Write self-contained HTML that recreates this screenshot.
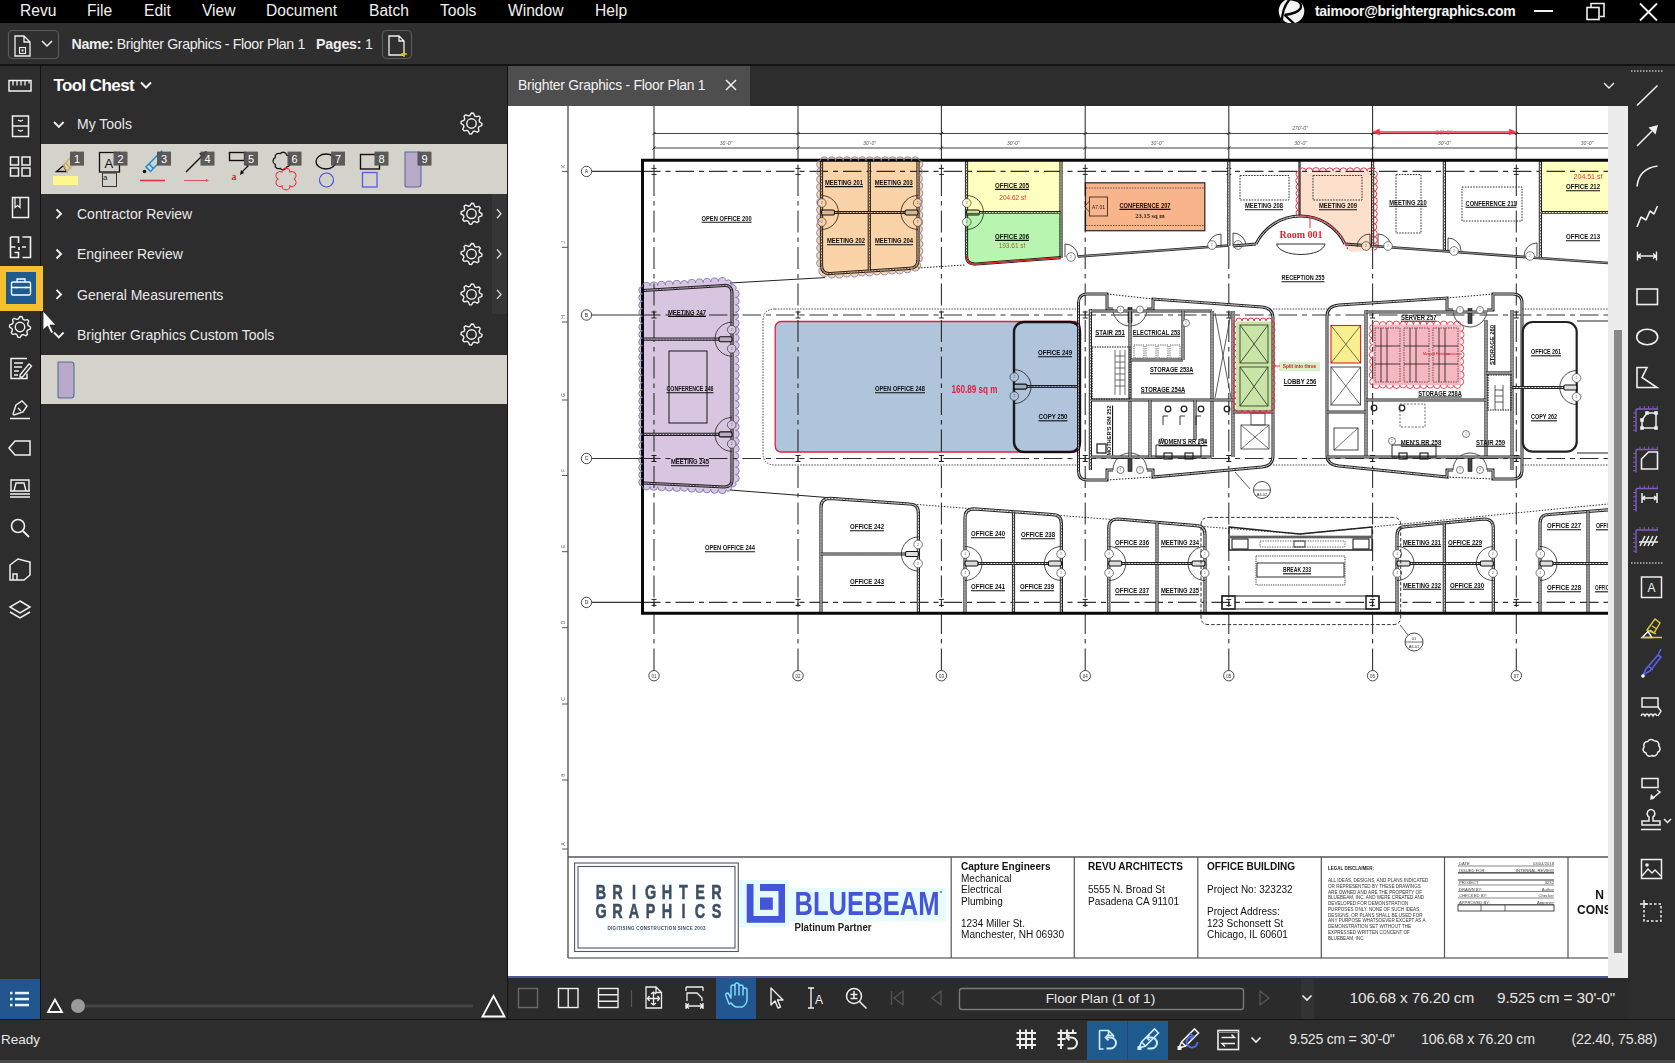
<!DOCTYPE html>
<html><head><meta charset="utf-8"><title>Revu</title>
<style>
html,body{margin:0;padding:0;}
body{width:1675px;height:1063px;position:relative;overflow:hidden;background:#2d2d2d;font-family:"Liberation Sans",sans-serif;}
.b{position:absolute;}
.t{position:absolute;white-space:nowrap;}
svg{position:absolute;left:0;top:0;}
</style></head><body>
<div class="b" style="left:0px;top:0px;width:1675px;height:23px;background:#000;"></div>
<div class="b" style="left:0px;top:23px;width:1675px;height:41px;background:#2f2f2f;"></div>
<div class="b" style="left:0px;top:64px;width:1675px;height:2px;background:#141414;"></div>
<div class="b" style="left:0px;top:66px;width:40px;height:954px;background:#2d2d2d;"></div>
<div class="b" style="left:40px;top:66px;width:1px;height:954px;background:#111;"></div>
<div class="b" style="left:41px;top:66px;width:466px;height:954px;background:#2d2d2d;"></div>
<div class="b" style="left:507px;top:66px;width:1px;height:954px;background:#151515;"></div>
<div class="b" style="left:508px;top:66px;width:1120px;height:40px;background:#2d2d2d;"></div>
<div class="b" style="left:508px;top:66px;width:242px;height:40px;background:#4e4e4e;"></div>
<div class="b" style="left:1628px;top:66px;width:47px;height:954px;background:#2d2d2d;"></div>
<div class="b" style="left:508px;top:978px;width:1120px;height:41px;background:#2b2b2b;"></div>
<div class="b" style="left:0px;top:1019px;width:1675px;height:1px;background:#151515;"></div>
<div class="b" style="left:0px;top:1020px;width:1675px;height:41px;background:#2d2d2d;"></div>
<div class="b" style="left:0px;top:1060px;width:1675px;height:3px;background:#4a4a4a;"></div>
<div class="b" style="left:41px;top:144px;width:466px;height:50px;background:#d4d3cb;"></div>
<div class="b" style="left:41px;top:355px;width:466px;height:49px;background:#d4d3cb;"></div>
<div class="b" style="left:492px;top:194px;width:15px;height:120px;background:#363636;"></div>
<div class="b" style="left:0px;top:266px;width:43px;height:45px;background:#f6bf30;"></div>
<div class="b" style="left:6px;top:272px;width:30px;height:32px;background:#1f5b8e;"></div>
<div class="b" style="left:0px;top:979px;width:40px;height:40px;background:#22568f;"></div>
<div class="b" style="left:716px;top:978px;width:40px;height:41px;background:#22568f;"></div>
<div class="b" style="left:1087px;top:1021px;width:81px;height:39px;background:#1e5a8e;"></div>
<div class="b" style="left:1127px;top:1021px;width:1px;height:39px;background:#1a4a75;"></div>
<div class="b" style="left:1608px;top:106px;width:20px;height:872px;background:#ececec;"></div>
<div class="b" style="left:1614px;top:330px;width:8px;height:623px;background:#888;"></div>
<div class="b" style="left:508px;top:976px;width:1100px;height:2px;background:#505a90;"></div>
<div class="t" style="left:20px;top:3.09px;font-size:15.6px;line-height:15.6px;color:#f0f0f0;">Revu</div>
<div class="t" style="left:87px;top:3.09px;font-size:15.6px;line-height:15.6px;color:#f0f0f0;">File</div>
<div class="t" style="left:144px;top:3.09px;font-size:15.6px;line-height:15.6px;color:#f0f0f0;">Edit</div>
<div class="t" style="left:202px;top:3.09px;font-size:15.6px;line-height:15.6px;color:#f0f0f0;">View</div>
<div class="t" style="left:266px;top:3.09px;font-size:15.6px;line-height:15.6px;color:#f0f0f0;">Document</div>
<div class="t" style="left:369px;top:3.09px;font-size:15.6px;line-height:15.6px;color:#f0f0f0;">Batch</div>
<div class="t" style="left:440px;top:3.09px;font-size:15.6px;line-height:15.6px;color:#f0f0f0;">Tools</div>
<div class="t" style="left:508px;top:3.09px;font-size:15.6px;line-height:15.6px;color:#f0f0f0;">Window</div>
<div class="t" style="left:595px;top:3.09px;font-size:15.6px;line-height:15.6px;color:#f0f0f0;">Help</div>
<div class="t" style="left:1315px;top:3.75px;font-size:14px;line-height:14px;color:#f4f4f4;font-weight:bold;letter-spacing:-0.3px;">taimoor@brightergraphics.com</div>
<div class="t" style="left:71.5px;top:36.88px;font-size:14.2px;line-height:14.2px;color:#ececec;letter-spacing:-0.35px;"><b>Name:</b> Brighter Graphics - Floor Plan 1</div>
<div class="t" style="left:316px;top:36.88px;font-size:14.2px;line-height:14.2px;color:#ececec;letter-spacing:-0.2px;"><b>Pages:</b> 1</div>
<div class="t" style="left:518px;top:78.63px;font-size:13.9px;line-height:13.9px;color:#f2f2f2;letter-spacing:-0.25px;">Brighter Graphics - Floor Plan 1</div>
<div class="t" style="left:53.5px;top:76.91px;font-size:17px;line-height:17px;color:#fafafa;font-weight:bold;letter-spacing:-0.6px;">Tool Chest</div>
<div class="t" style="left:77px;top:117.15px;font-size:14px;line-height:14px;color:#e8e8e8;">My Tools</div>
<div class="t" style="left:77px;top:207.05px;font-size:14px;line-height:14px;color:#e8e8e8;">Contractor Review</div>
<div class="t" style="left:77px;top:247.15px;font-size:14px;line-height:14px;color:#e8e8e8;">Engineer Review</div>
<div class="t" style="left:77px;top:287.55px;font-size:14px;line-height:14px;color:#e8e8e8;">General Measurements</div>
<div class="t" style="left:77px;top:327.65px;font-size:14px;line-height:14px;color:#e8e8e8;">Brighter Graphics Custom Tools</div>
<div class="t" style="left:1px;top:1032.57px;font-size:13.5px;line-height:13.5px;color:#e8e8e8;">Ready</div>
<div class="t" style="left:1100.5px;top:991.90px;font-size:13.7px;line-height:13.7px;color:#eaeaea;transform:translateX(-50%);">Floor Plan (1 of 1)</div>
<div class="t" style="left:1349.5px;top:990.16px;font-size:15.4px;line-height:15.4px;color:#e4e4e4;letter-spacing:-0.12px;">106.68 x 76.20 cm</div>
<div class="t" style="left:1497px;top:990.16px;font-size:15.4px;line-height:15.4px;color:#e4e4e4;letter-spacing:-0.12px;">9.525 cm = 30'-0"</div>
<div class="t" style="left:1289px;top:1032.28px;font-size:14.2px;line-height:14.2px;color:#e4e4e4;letter-spacing:-0.3px;">9.525 cm = 30'-0"</div>
<div class="t" style="left:1421px;top:1032.28px;font-size:14.2px;line-height:14.2px;color:#e4e4e4;letter-spacing:-0.17px;">106.68 x 76.20 cm</div>
<div class="t" style="left:1571.5px;top:1032.28px;font-size:14.2px;line-height:14.2px;color:#e4e4e4;letter-spacing:-0.2px;">(22.40, 75.88)</div>

<svg width="1675" height="1063" viewBox="0 0 1675 1063">
<defs><clipPath id="dc"><rect x="508" y="106" width="1100" height="870"/></clipPath></defs>
<g clip-path="url(#dc)">
<rect x="508" y="106" width="1100" height="870" fill="#fff"/>
<line x1="568" y1="106" x2="568" y2="958" stroke="#555" stroke-width="1.4" />
<line x1="568" y1="857" x2="1608" y2="857" stroke="#555" stroke-width="1.4" />
<line x1="568" y1="958" x2="1608" y2="958" stroke="#777" stroke-width="1.6" />
<line x1="951.2" y1="857" x2="951.2" y2="958" stroke="#555" stroke-width="1.2" />
<line x1="1074.3" y1="857" x2="1074.3" y2="958" stroke="#555" stroke-width="1.2" />
<line x1="1197.8" y1="857" x2="1197.8" y2="958" stroke="#555" stroke-width="1.2" />
<line x1="1321.3" y1="857" x2="1321.3" y2="958" stroke="#555" stroke-width="1.2" />
<line x1="1444.5" y1="857" x2="1444.5" y2="958" stroke="#555" stroke-width="1.2" />
<line x1="1568" y1="857" x2="1568" y2="958" stroke="#555" stroke-width="1.2" />
<line x1="562" y1="171.4" x2="568" y2="171.4" stroke="#555" stroke-width="1" />
<text x="563.5" y="167.9" font-size="5" font-family="Liberation Sans" fill="#555" text-anchor="middle" transform="rotate(-90 563.5 166.4)">K</text>
<line x1="562" y1="247.3" x2="568" y2="247.3" stroke="#555" stroke-width="1" />
<text x="563.5" y="243.8" font-size="5" font-family="Liberation Sans" fill="#555" text-anchor="middle" transform="rotate(-90 563.5 242.3)">J</text>
<line x1="562" y1="322" x2="568" y2="322" stroke="#555" stroke-width="1" />
<text x="563.5" y="318.5" font-size="5" font-family="Liberation Sans" fill="#555" text-anchor="middle" transform="rotate(-90 563.5 317)">H</text>
<line x1="562" y1="400" x2="568" y2="400" stroke="#555" stroke-width="1" />
<text x="563.5" y="396.5" font-size="5" font-family="Liberation Sans" fill="#555" text-anchor="middle" transform="rotate(-90 563.5 395)">G</text>
<line x1="562" y1="475.5" x2="568" y2="475.5" stroke="#555" stroke-width="1" />
<text x="563.5" y="472.0" font-size="5" font-family="Liberation Sans" fill="#555" text-anchor="middle" transform="rotate(-90 563.5 470.5)">F</text>
<line x1="562" y1="551.7" x2="568" y2="551.7" stroke="#555" stroke-width="1" />
<text x="563.5" y="548.2" font-size="5" font-family="Liberation Sans" fill="#555" text-anchor="middle" transform="rotate(-90 563.5 546.7)">E</text>
<line x1="562" y1="627.7" x2="568" y2="627.7" stroke="#555" stroke-width="1" />
<text x="563.5" y="624.2" font-size="5" font-family="Liberation Sans" fill="#555" text-anchor="middle" transform="rotate(-90 563.5 622.7)">D</text>
<line x1="562" y1="704" x2="568" y2="704" stroke="#555" stroke-width="1" />
<text x="563.5" y="700.5" font-size="5" font-family="Liberation Sans" fill="#555" text-anchor="middle" transform="rotate(-90 563.5 699)">C</text>
<line x1="562" y1="780" x2="568" y2="780" stroke="#555" stroke-width="1" />
<text x="563.5" y="776.5" font-size="5" font-family="Liberation Sans" fill="#555" text-anchor="middle" transform="rotate(-90 563.5 775)">B</text>
<line x1="562" y1="849" x2="568" y2="849" stroke="#555" stroke-width="1" />
<text x="563.5" y="845.5" font-size="5" font-family="Liberation Sans" fill="#555" text-anchor="middle" transform="rotate(-90 563.5 844)">A</text>
<line x1="654" y1="106" x2="654" y2="148" stroke="#333" stroke-width="1.1" />
<line x1="654" y1="670.5" x2="654" y2="148" stroke="#333" stroke-width="1.1" stroke-dasharray="22 5 4.5 5" />
<circle cx="654" cy="675.7" r="5.2" fill="#fff" stroke="#333" stroke-width="0.9"/>
<line x1="798" y1="106" x2="798" y2="148" stroke="#333" stroke-width="1.1" />
<line x1="798" y1="670.5" x2="798" y2="148" stroke="#333" stroke-width="1.1" stroke-dasharray="22 5 4.5 5" />
<circle cx="798" cy="675.7" r="5.2" fill="#fff" stroke="#333" stroke-width="0.9"/>
<line x1="941.4" y1="106" x2="941.4" y2="148" stroke="#333" stroke-width="1.1" />
<line x1="941.4" y1="670.5" x2="941.4" y2="148" stroke="#333" stroke-width="1.1" stroke-dasharray="22 5 4.5 5" />
<circle cx="941.4" cy="675.7" r="5.2" fill="#fff" stroke="#333" stroke-width="0.9"/>
<line x1="1085.2" y1="106" x2="1085.2" y2="148" stroke="#333" stroke-width="1.1" />
<line x1="1085.2" y1="670.5" x2="1085.2" y2="148" stroke="#333" stroke-width="1.1" stroke-dasharray="22 5 4.5 5" />
<circle cx="1085.2" cy="675.7" r="5.2" fill="#fff" stroke="#333" stroke-width="0.9"/>
<line x1="1228.8" y1="106" x2="1228.8" y2="148" stroke="#333" stroke-width="1.1" />
<line x1="1228.8" y1="670.5" x2="1228.8" y2="148" stroke="#333" stroke-width="1.1" stroke-dasharray="22 5 4.5 5" />
<circle cx="1228.8" cy="675.7" r="5.2" fill="#fff" stroke="#333" stroke-width="0.9"/>
<line x1="1372.6" y1="106" x2="1372.6" y2="148" stroke="#333" stroke-width="1.1" />
<line x1="1372.6" y1="670.5" x2="1372.6" y2="148" stroke="#333" stroke-width="1.1" stroke-dasharray="22 5 4.5 5" />
<circle cx="1372.6" cy="675.7" r="5.2" fill="#fff" stroke="#333" stroke-width="0.9"/>
<line x1="1516.3" y1="106" x2="1516.3" y2="148" stroke="#333" stroke-width="1.1" />
<line x1="1516.3" y1="670.5" x2="1516.3" y2="148" stroke="#333" stroke-width="1.1" stroke-dasharray="22 5 4.5 5" />
<circle cx="1516.3" cy="675.7" r="5.2" fill="#fff" stroke="#333" stroke-width="0.9"/>
<line x1="591.7" y1="171.4" x2="642" y2="171.4" stroke="#333" stroke-width="1.1" />
<line x1="642" y1="171.4" x2="1608" y2="171.4" stroke="#333" stroke-width="1.1" stroke-dasharray="18.5 5 5 5" />
<circle cx="586.5" cy="171.4" r="5.2" fill="#fff" stroke="#333" stroke-width="0.9"/>
<text x="586.5" y="173.20000000000002" font-size="5" font-family="Liberation Sans" fill="#333" text-anchor="middle">A</text>
<line x1="591.7" y1="315" x2="642" y2="315" stroke="#333" stroke-width="1.1" />
<line x1="642" y1="315" x2="1608" y2="315" stroke="#333" stroke-width="1.1" stroke-dasharray="18.5 5 5 5" />
<circle cx="586.5" cy="315" r="5.2" fill="#fff" stroke="#333" stroke-width="0.9"/>
<text x="586.5" y="316.8" font-size="5" font-family="Liberation Sans" fill="#333" text-anchor="middle">B</text>
<line x1="591.7" y1="458.5" x2="642" y2="458.5" stroke="#333" stroke-width="1.1" />
<line x1="642" y1="458.5" x2="1608" y2="458.5" stroke="#333" stroke-width="1.1" stroke-dasharray="18.5 5 5 5" />
<circle cx="586.5" cy="458.5" r="5.2" fill="#fff" stroke="#333" stroke-width="0.9"/>
<text x="586.5" y="460.3" font-size="5" font-family="Liberation Sans" fill="#333" text-anchor="middle">C</text>
<line x1="591.7" y1="602.4" x2="642" y2="602.4" stroke="#333" stroke-width="1.1" />
<line x1="642" y1="602.4" x2="1608" y2="602.4" stroke="#333" stroke-width="1.1" stroke-dasharray="18.5 5 5 5" />
<circle cx="586.5" cy="602.4" r="5.2" fill="#fff" stroke="#333" stroke-width="0.9"/>
<text x="586.5" y="604.1999999999999" font-size="5" font-family="Liberation Sans" fill="#333" text-anchor="middle">D</text>
<text x="654" y="677.5" font-size="4.5" font-family="Liberation Sans" fill="#333" text-anchor="middle">01</text>
<text x="798" y="677.5" font-size="4.5" font-family="Liberation Sans" fill="#333" text-anchor="middle">02</text>
<text x="941.4" y="677.5" font-size="4.5" font-family="Liberation Sans" fill="#333" text-anchor="middle">03</text>
<text x="1085.2" y="677.5" font-size="4.5" font-family="Liberation Sans" fill="#333" text-anchor="middle">04</text>
<text x="1228.8" y="677.5" font-size="4.5" font-family="Liberation Sans" fill="#333" text-anchor="middle">05</text>
<text x="1372.6" y="677.5" font-size="4.5" font-family="Liberation Sans" fill="#333" text-anchor="middle">06</text>
<text x="1516.3" y="677.5" font-size="4.5" font-family="Liberation Sans" fill="#333" text-anchor="middle">07</text>
<path d="M651.5 168.4 h5 M651.5 174.4 h5 M654 168.4 v6" stroke="#222" stroke-width="1" fill="none" />
<path d="M651.5 312 h5 M651.5 318 h5 M654 312 v6" stroke="#222" stroke-width="1" fill="none" />
<path d="M651.5 455.5 h5 M651.5 461.5 h5 M654 455.5 v6" stroke="#222" stroke-width="1" fill="none" />
<path d="M651.5 599.4 h5 M651.5 605.4 h5 M654 599.4 v6" stroke="#222" stroke-width="1" fill="none" />
<path d="M795.5 168.4 h5 M795.5 174.4 h5 M798 168.4 v6" stroke="#222" stroke-width="1" fill="none" />
<path d="M795.5 312 h5 M795.5 318 h5 M798 312 v6" stroke="#222" stroke-width="1" fill="none" />
<path d="M795.5 455.5 h5 M795.5 461.5 h5 M798 455.5 v6" stroke="#222" stroke-width="1" fill="none" />
<path d="M795.5 599.4 h5 M795.5 605.4 h5 M798 599.4 v6" stroke="#222" stroke-width="1" fill="none" />
<path d="M938.9 168.4 h5 M938.9 174.4 h5 M941.4 168.4 v6" stroke="#222" stroke-width="1" fill="none" />
<path d="M938.9 312 h5 M938.9 318 h5 M941.4 312 v6" stroke="#222" stroke-width="1" fill="none" />
<path d="M938.9 455.5 h5 M938.9 461.5 h5 M941.4 455.5 v6" stroke="#222" stroke-width="1" fill="none" />
<path d="M938.9 599.4 h5 M938.9 605.4 h5 M941.4 599.4 v6" stroke="#222" stroke-width="1" fill="none" />
<path d="M1082.7 168.4 h5 M1082.7 174.4 h5 M1085.2 168.4 v6" stroke="#222" stroke-width="1" fill="none" />
<path d="M1082.7 312 h5 M1082.7 318 h5 M1085.2 312 v6" stroke="#222" stroke-width="1" fill="none" />
<path d="M1082.7 455.5 h5 M1082.7 461.5 h5 M1085.2 455.5 v6" stroke="#222" stroke-width="1" fill="none" />
<path d="M1082.7 599.4 h5 M1082.7 605.4 h5 M1085.2 599.4 v6" stroke="#222" stroke-width="1" fill="none" />
<path d="M1226.3 168.4 h5 M1226.3 174.4 h5 M1228.8 168.4 v6" stroke="#222" stroke-width="1" fill="none" />
<path d="M1226.3 312 h5 M1226.3 318 h5 M1228.8 312 v6" stroke="#222" stroke-width="1" fill="none" />
<path d="M1226.3 455.5 h5 M1226.3 461.5 h5 M1228.8 455.5 v6" stroke="#222" stroke-width="1" fill="none" />
<path d="M1226.3 599.4 h5 M1226.3 605.4 h5 M1228.8 599.4 v6" stroke="#222" stroke-width="1" fill="none" />
<path d="M1370.1 168.4 h5 M1370.1 174.4 h5 M1372.6 168.4 v6" stroke="#222" stroke-width="1" fill="none" />
<path d="M1370.1 312 h5 M1370.1 318 h5 M1372.6 312 v6" stroke="#222" stroke-width="1" fill="none" />
<path d="M1370.1 455.5 h5 M1370.1 461.5 h5 M1372.6 455.5 v6" stroke="#222" stroke-width="1" fill="none" />
<path d="M1370.1 599.4 h5 M1370.1 605.4 h5 M1372.6 599.4 v6" stroke="#222" stroke-width="1" fill="none" />
<path d="M1513.8 168.4 h5 M1513.8 174.4 h5 M1516.3 168.4 v6" stroke="#222" stroke-width="1" fill="none" />
<path d="M1513.8 312 h5 M1513.8 318 h5 M1516.3 312 v6" stroke="#222" stroke-width="1" fill="none" />
<path d="M1513.8 455.5 h5 M1513.8 461.5 h5 M1516.3 455.5 v6" stroke="#222" stroke-width="1" fill="none" />
<path d="M1513.8 599.4 h5 M1513.8 605.4 h5 M1516.3 599.4 v6" stroke="#222" stroke-width="1" fill="none" />
<line x1="654" y1="133.5" x2="1608" y2="133.5" stroke="#444" stroke-width="1.1" />
<line x1="654" y1="148" x2="1608" y2="148" stroke="#444" stroke-width="1.1" />
<path d="M652.5 149.5 l3 -3 M652.5 135.0 l3 -3" stroke="#222" stroke-width="1" fill="none" />
<path d="M796.5 149.5 l3 -3 M796.5 135.0 l3 -3" stroke="#222" stroke-width="1" fill="none" />
<path d="M939.9 149.5 l3 -3 M939.9 135.0 l3 -3" stroke="#222" stroke-width="1" fill="none" />
<path d="M1083.7 149.5 l3 -3 M1083.7 135.0 l3 -3" stroke="#222" stroke-width="1" fill="none" />
<path d="M1227.3 149.5 l3 -3 M1227.3 135.0 l3 -3" stroke="#222" stroke-width="1" fill="none" />
<path d="M1371.1 149.5 l3 -3 M1371.1 135.0 l3 -3" stroke="#222" stroke-width="1" fill="none" />
<path d="M1514.8 149.5 l3 -3 M1514.8 135.0 l3 -3" stroke="#222" stroke-width="1" fill="none" />
<text x="726.0" y="144.5" font-size="5" font-family="Liberation Sans" fill="#555" text-anchor="middle" font-style="italic">30'-0"</text>
<text x="869.7" y="144.5" font-size="5" font-family="Liberation Sans" fill="#555" text-anchor="middle" font-style="italic">30'-0"</text>
<text x="1013.3" y="144.5" font-size="5" font-family="Liberation Sans" fill="#555" text-anchor="middle" font-style="italic">30'-0"</text>
<text x="1157.0" y="144.5" font-size="5" font-family="Liberation Sans" fill="#555" text-anchor="middle" font-style="italic">30'-0"</text>
<text x="1300.6999999999998" y="144.5" font-size="5" font-family="Liberation Sans" fill="#555" text-anchor="middle" font-style="italic">30'-0"</text>
<text x="1444.4499999999998" y="144.5" font-size="5" font-family="Liberation Sans" fill="#555" text-anchor="middle" font-style="italic">30'-0"</text>
<text x="1587" y="144.5" font-size="5" font-family="Liberation Sans" fill="#555" text-anchor="middle" font-style="italic">30'-0"</text>
<text x="1300" y="130" font-size="5" font-family="Liberation Sans" fill="#555" text-anchor="middle" font-style="italic">270'-0"</text>
<line x1="821.5" y1="161" x2="821.5" y2="265" stroke="#222" stroke-width="3.2"/>
<line x1="821.5" y1="161" x2="821.5" y2="265" stroke="#e8e8e8" stroke-width="1.2"/>
<line x1="821.5" y1="161" x2="821.5" y2="265" stroke="#777" stroke-width="1.2" stroke-dasharray="1.6 1.4"/>
<line x1="918" y1="161" x2="918" y2="261" stroke="#222" stroke-width="3.2"/>
<line x1="918" y1="161" x2="918" y2="261" stroke="#e8e8e8" stroke-width="1.2"/>
<line x1="918" y1="161" x2="918" y2="261" stroke="#777" stroke-width="1.2" stroke-dasharray="1.6 1.4"/>
<path d="M821.5 265 Q821.5 274 830 273.5 L910 268.3 Q918 267.8 918 260" stroke="#222" stroke-width="3.2" fill="none"/>
<path d="M821.5 265 Q821.5 274 830 273.5 L910 268.3 Q918 267.8 918 260" stroke="#e8e8e8" stroke-width="1.2" fill="none"/>
<path d="M821.5 265 Q821.5 274 830 273.5 L910 268.3 Q918 267.8 918 260" stroke="#777" stroke-width="1.2" fill="none" stroke-dasharray="1.6 1.4"/>
<line x1="869.3" y1="161" x2="869.3" y2="271" stroke="#222" stroke-width="3.2"/>
<line x1="869.3" y1="161" x2="869.3" y2="271" stroke="#e8e8e8" stroke-width="1.2"/>
<line x1="869.3" y1="161" x2="869.3" y2="271" stroke="#777" stroke-width="1.2" stroke-dasharray="1.6 1.4"/>
<line x1="821.5" y1="212.5" x2="918" y2="212.5" stroke="#222" stroke-width="3"/>
<line x1="821.5" y1="212.5" x2="918" y2="212.5" stroke="#e8e8e8" stroke-width="1.0"/>
<line x1="821.5" y1="212.5" x2="918" y2="212.5" stroke="#777" stroke-width="1.0" stroke-dasharray="1.6 1.4"/>
<path d="M821.5 195.5 A17 17 0 0 1 821.5 229.5" fill="none" stroke="#222" stroke-width="0.8"/>
<rect x="821.5" y="210.0" width="13" height="5" rx="1.5" fill="#ddd" stroke="#111" stroke-width="1.1"/>
<circle cx="821.8" cy="203.0" r="4.3" fill="#fff" stroke="#444" stroke-width="0.7"/>
<text x="821.8" y="204.2" font-size="3.3" font-family="Liberation Sans" fill="#666" text-anchor="middle">2</text>
<circle cx="821.8" cy="222.0" r="4.3" fill="#fff" stroke="#444" stroke-width="0.7"/>
<text x="821.8" y="223.2" font-size="3.3" font-family="Liberation Sans" fill="#666" text-anchor="middle">2</text>
<path d="M918 195.5 A17 17 0 0 0 918 229.5" fill="none" stroke="#222" stroke-width="0.8"/>
<rect x="905" y="210.0" width="13" height="5" rx="1.5" fill="#ddd" stroke="#111" stroke-width="1.1"/>
<circle cx="917.7" cy="203.0" r="4.3" fill="#fff" stroke="#444" stroke-width="0.7"/>
<text x="917.7" y="204.2" font-size="3.3" font-family="Liberation Sans" fill="#666" text-anchor="middle">2</text>
<circle cx="917.7" cy="222.0" r="4.3" fill="#fff" stroke="#444" stroke-width="0.7"/>
<text x="917.7" y="223.2" font-size="3.3" font-family="Liberation Sans" fill="#666" text-anchor="middle">2</text>
<line x1="966.5" y1="161" x2="966.5" y2="256" stroke="#222" stroke-width="3.2"/>
<line x1="966.5" y1="161" x2="966.5" y2="256" stroke="#e8e8e8" stroke-width="1.2"/>
<line x1="966.5" y1="161" x2="966.5" y2="256" stroke="#777" stroke-width="1.2" stroke-dasharray="1.6 1.4"/>
<line x1="1061" y1="161" x2="1061" y2="258" stroke="#222" stroke-width="3.2"/>
<line x1="1061" y1="161" x2="1061" y2="258" stroke="#e8e8e8" stroke-width="1.2"/>
<line x1="1061" y1="161" x2="1061" y2="258" stroke="#777" stroke-width="1.2" stroke-dasharray="1.6 1.4"/>
<line x1="966.5" y1="212.5" x2="1061" y2="212.5" stroke="#222" stroke-width="3.2"/>
<line x1="966.5" y1="212.5" x2="1061" y2="212.5" stroke="#e8e8e8" stroke-width="1.2"/>
<line x1="966.5" y1="212.5" x2="1061" y2="212.5" stroke="#777" stroke-width="1.2" stroke-dasharray="1.6 1.4"/>
<path d="M966.5 256 Q966.5 264.5 976 264 L1061 257.6" stroke="#222" stroke-width="3.2" fill="none"/>
<path d="M966.5 256 Q966.5 264.5 976 264 L1061 257.6" stroke="#e8e8e8" stroke-width="1.2" fill="none"/>
<path d="M966.5 256 Q966.5 264.5 976 264 L1061 257.6" stroke="#777" stroke-width="1.2" fill="none" stroke-dasharray="1.6 1.4"/>
<path d="M966.5 195.5 A17 17 0 0 1 966.5 229.5" fill="none" stroke="#222" stroke-width="0.8"/>
<rect x="966.5" y="210.0" width="13" height="5" rx="1.5" fill="#ddd" stroke="#111" stroke-width="1.1"/>
<circle cx="966.8" cy="203.0" r="4.3" fill="#fff" stroke="#444" stroke-width="0.7"/>
<text x="966.8" y="204.2" font-size="3.3" font-family="Liberation Sans" fill="#666" text-anchor="middle">2</text>
<circle cx="966.8" cy="222.0" r="4.3" fill="#fff" stroke="#444" stroke-width="0.7"/>
<text x="966.8" y="223.2" font-size="3.3" font-family="Liberation Sans" fill="#666" text-anchor="middle">2</text>
<path d="M730 283 L825 277.6" stroke="#222" stroke-width="1" fill="none" />
<path d="M918 268 L965 265" stroke="#222" stroke-width="1" fill="none" stroke-dasharray="1.5 1.5" />
<line x1="1078" y1="256.5" x2="1228.8" y2="245.5" stroke="#222" stroke-width="2.6"/>
<line x1="1078" y1="256.5" x2="1228.8" y2="245.5" stroke="#e8e8e8" stroke-width="0.6"/>
<line x1="1078" y1="256.5" x2="1228.8" y2="245.5" stroke="#777" stroke-width="0.6" stroke-dasharray="1.6 1.4"/>
<path d="M1065 257 v-13 A13 13 0 0 1 1078 257" stroke="#222" stroke-width="0.8" fill="none" />
<circle cx="1071" cy="257" r="4.3" fill="#fff" stroke="#444" stroke-width="0.7"/>
<text x="1071" y="258.2" font-size="3.3" font-family="Liberation Sans" fill="#666" text-anchor="middle">2</text>
<path d="M1221 247 v-13 A13 13 0 0 0 1208 247" stroke="#222" stroke-width="0.8" fill="none" />
<circle cx="1212" cy="245" r="4.3" fill="#fff" stroke="#444" stroke-width="0.7"/>
<text x="1212" y="246.2" font-size="3.3" font-family="Liberation Sans" fill="#666" text-anchor="middle">2</text>
<line x1="1228.8" y1="161" x2="1228.8" y2="246" stroke="#222" stroke-width="3.2"/>
<line x1="1228.8" y1="161" x2="1228.8" y2="246" stroke="#e8e8e8" stroke-width="1.2"/>
<line x1="1228.8" y1="161" x2="1228.8" y2="246" stroke="#777" stroke-width="1.2" stroke-dasharray="1.6 1.4"/>
<path d="M1233 246 v-13 A13 13 0 0 1 1246 246" stroke="#222" stroke-width="0.8" fill="none" />
<circle cx="1238" cy="245" r="4.3" fill="#fff" stroke="#444" stroke-width="0.7"/>
<text x="1238" y="246.2" font-size="3.3" font-family="Liberation Sans" fill="#666" text-anchor="middle">2</text>
<rect x="1240" y="175.5" width="49" height="24.5" fill="none" stroke="#333" stroke-width="1" stroke-dasharray="1.6 1.2"/>
<rect x="1313" y="175.5" width="49" height="24.5" fill="none" stroke="#333" stroke-width="1" stroke-dasharray="1.6 1.2"/>
<path d="M1256 244 A49.4 49.4 0 0 1 1345 244" stroke="#222" stroke-width="3" fill="none"/>
<path d="M1256 244 A49.4 49.4 0 0 1 1345 244" stroke="#e8e8e8" stroke-width="1.0" fill="none"/>
<path d="M1256 244 A49.4 49.4 0 0 1 1345 244" stroke="#777" stroke-width="1.0" fill="none" stroke-dasharray="1.6 1.4"/>
<path d="M1233 246 L1256 244" stroke="#222" stroke-width="2.8" fill="none"/>
<path d="M1233 246 L1256 244" stroke="#e8e8e8" stroke-width="0.8" fill="none"/>
<path d="M1233 246 L1256 244" stroke="#777" stroke-width="0.8" fill="none" stroke-dasharray="1.6 1.4"/>
<path d="M1345 244 L1372 246" stroke="#222" stroke-width="2.8" fill="none"/>
<path d="M1345 244 L1372 246" stroke="#e8e8e8" stroke-width="0.8" fill="none"/>
<path d="M1345 244 L1372 246" stroke="#777" stroke-width="0.8" fill="none" stroke-dasharray="1.6 1.4"/>
<path d="M1276.5 244 H1325 C1322 258 1280 258 1276.5 244 Z" stroke="#333" stroke-width="1" fill="none" />
<path d="M1370 247 v-13 A13 13 0 0 0 1357 247" stroke="#222" stroke-width="0.8" fill="none" />
<circle cx="1366" cy="246" r="4.3" fill="#fff" stroke="#444" stroke-width="0.7"/>
<text x="1366" y="247.2" font-size="3.3" font-family="Liberation Sans" fill="#666" text-anchor="middle">2</text>
<line x1="1299.5" y1="161" x2="1299.5" y2="216" stroke="#222" stroke-width="2.2"/>
<line x1="1299.5" y1="161" x2="1299.5" y2="216" stroke="#e8e8e8" stroke-width="0.2"/>
<line x1="1299.5" y1="161" x2="1299.5" y2="216" stroke="#777" stroke-width="0.2" stroke-dasharray="1.6 1.4"/>
<line x1="1372.6" y1="161" x2="1372.6" y2="246" stroke="#222" stroke-width="3.2"/>
<line x1="1372.6" y1="161" x2="1372.6" y2="246" stroke="#e8e8e8" stroke-width="1.2"/>
<line x1="1372.6" y1="161" x2="1372.6" y2="246" stroke="#777" stroke-width="1.2" stroke-dasharray="1.6 1.4"/>
<line x1="1444.4" y1="161" x2="1444.4" y2="251" stroke="#222" stroke-width="3.2"/>
<line x1="1444.4" y1="161" x2="1444.4" y2="251" stroke="#e8e8e8" stroke-width="1.2"/>
<line x1="1444.4" y1="161" x2="1444.4" y2="251" stroke="#777" stroke-width="1.2" stroke-dasharray="1.6 1.4"/>
<line x1="1540.4" y1="161" x2="1540.4" y2="257" stroke="#222" stroke-width="3.2"/>
<line x1="1540.4" y1="161" x2="1540.4" y2="257" stroke="#e8e8e8" stroke-width="1.2"/>
<line x1="1540.4" y1="161" x2="1540.4" y2="257" stroke="#777" stroke-width="1.2" stroke-dasharray="1.6 1.4"/>
<line x1="1372.6" y1="246" x2="1608" y2="263" stroke="#222" stroke-width="2.6"/>
<line x1="1372.6" y1="246" x2="1608" y2="263" stroke="#e8e8e8" stroke-width="0.6"/>
<line x1="1372.6" y1="246" x2="1608" y2="263" stroke="#777" stroke-width="0.6" stroke-dasharray="1.6 1.4"/>
<path d="M1378 247 v-13 A13 13 0 0 1 1391 247" stroke="#222" stroke-width="0.8" fill="none" />
<circle cx="1388" cy="246" r="4.3" fill="#fff" stroke="#444" stroke-width="0.7"/>
<text x="1388" y="247.2" font-size="3.3" font-family="Liberation Sans" fill="#666" text-anchor="middle">2</text>
<path d="M1448 251 v-13 A13 13 0 0 1 1461 251" stroke="#222" stroke-width="0.8" fill="none" />
<circle cx="1454" cy="251" r="4.3" fill="#fff" stroke="#444" stroke-width="0.7"/>
<text x="1454" y="252.2" font-size="3.3" font-family="Liberation Sans" fill="#666" text-anchor="middle">2</text>
<path d="M1537 256 v-13 A13 13 0 0 0 1524 256" stroke="#222" stroke-width="0.8" fill="none" />
<circle cx="1530" cy="256" r="4.3" fill="#fff" stroke="#444" stroke-width="0.7"/>
<text x="1530" y="257.2" font-size="3.3" font-family="Liberation Sans" fill="#666" text-anchor="middle">2</text>
<rect x="1396" y="174.5" width="25" height="58.5" fill="none" stroke="#333" stroke-width="1" stroke-dasharray="1.6 1.2"/>
<rect x="1462" y="187" width="60" height="34" fill="none" stroke="#333" stroke-width="1" stroke-dasharray="1.6 1.2"/>
<line x1="1541.5" y1="212.5" x2="1608" y2="212.5" stroke="#222" stroke-width="3.2"/>
<line x1="1541.5" y1="212.5" x2="1608" y2="212.5" stroke="#e8e8e8" stroke-width="1.2"/>
<line x1="1541.5" y1="212.5" x2="1608" y2="212.5" stroke="#777" stroke-width="1.2" stroke-dasharray="1.6 1.4"/>
<path d="M643 290.5 L724 285.5 Q732 285 732 293 V480 Q732 487 724 487 L643 483" stroke="#222" stroke-width="3.2" fill="none"/>
<path d="M643 290.5 L724 285.5 Q732 285 732 293 V480 Q732 487 724 487 L643 483" stroke="#e8e8e8" stroke-width="1.2" fill="none"/>
<path d="M643 290.5 L724 285.5 Q732 285 732 293 V480 Q732 487 724 487 L643 483" stroke="#777" stroke-width="1.2" fill="none" stroke-dasharray="1.6 1.4"/>
<line x1="643" y1="339.2" x2="732" y2="339.2" stroke="#222" stroke-width="3.2"/>
<line x1="643" y1="339.2" x2="732" y2="339.2" stroke="#e8e8e8" stroke-width="1.2"/>
<line x1="643" y1="339.2" x2="732" y2="339.2" stroke="#777" stroke-width="1.2" stroke-dasharray="1.6 1.4"/>
<line x1="643" y1="434.4" x2="732" y2="434.4" stroke="#222" stroke-width="3.2"/>
<line x1="643" y1="434.4" x2="732" y2="434.4" stroke="#e8e8e8" stroke-width="1.2"/>
<line x1="643" y1="434.4" x2="732" y2="434.4" stroke="#777" stroke-width="1.2" stroke-dasharray="1.6 1.4"/>
<rect x="669" y="351" width="38" height="72" fill="none" stroke="#333" stroke-width="1.1"/>
<path d="M732 322.2 A17 17 0 0 0 732 356.2" fill="none" stroke="#222" stroke-width="0.8"/>
<rect x="719" y="336.7" width="13" height="5" rx="1.5" fill="#ddd" stroke="#111" stroke-width="1.1"/>
<circle cx="731.7" cy="329.7" r="4.3" fill="#fff" stroke="#444" stroke-width="0.7"/>
<text x="731.7" y="330.9" font-size="3.3" font-family="Liberation Sans" fill="#666" text-anchor="middle">2</text>
<circle cx="731.7" cy="348.7" r="4.3" fill="#fff" stroke="#444" stroke-width="0.7"/>
<text x="731.7" y="349.9" font-size="3.3" font-family="Liberation Sans" fill="#666" text-anchor="middle">2</text>
<path d="M732 417.4 A17 17 0 0 0 732 451.4" fill="none" stroke="#222" stroke-width="0.8"/>
<rect x="719" y="431.9" width="13" height="5" rx="1.5" fill="#ddd" stroke="#111" stroke-width="1.1"/>
<circle cx="731.7" cy="424.9" r="4.3" fill="#fff" stroke="#444" stroke-width="0.7"/>
<text x="731.7" y="426.09999999999997" font-size="3.3" font-family="Liberation Sans" fill="#666" text-anchor="middle">2</text>
<circle cx="731.7" cy="443.9" r="4.3" fill="#fff" stroke="#444" stroke-width="0.7"/>
<text x="731.7" y="445.09999999999997" font-size="3.3" font-family="Liberation Sans" fill="#666" text-anchor="middle">2</text>
<path d="M775 309 H1080 M775 465 H1080" stroke="#333" stroke-width="0.9" fill="none" stroke-dasharray="1.5 1.3" />
<path d="M775 309 Q763 309 763 321 V453 Q763 465 775 465" stroke="#333" stroke-width="0.9" fill="none" stroke-dasharray="1.5 1.3" />
<rect x="1014" y="322" width="66" height="130" rx="10" fill="none" stroke="#222" stroke-width="2.4"/>
<line x1="1014" y1="386.6" x2="1080" y2="386.6" stroke="#222" stroke-width="3"/>
<line x1="1014" y1="386.6" x2="1080" y2="386.6" stroke="#e8e8e8" stroke-width="1.0"/>
<line x1="1014" y1="386.6" x2="1080" y2="386.6" stroke="#777" stroke-width="1.0" stroke-dasharray="1.6 1.4"/>
<path d="M1014 369.6 A17 17 0 0 1 1014 403.6" fill="none" stroke="#222" stroke-width="0.8"/>
<rect x="1014" y="384.1" width="13" height="5" rx="1.5" fill="#ddd" stroke="#111" stroke-width="1.1"/>
<circle cx="1014.3" cy="377.1" r="4.3" fill="#fff" stroke="#444" stroke-width="0.7"/>
<text x="1014.3" y="378.3" font-size="3.3" font-family="Liberation Sans" fill="#666" text-anchor="middle">2</text>
<circle cx="1014.3" cy="396.1" r="4.3" fill="#fff" stroke="#444" stroke-width="0.7"/>
<text x="1014.3" y="397.3" font-size="3.3" font-family="Liberation Sans" fill="#666" text-anchor="middle">2</text>
<path d="M1113 309 H1107 V294 H1087 Q1078.5 294 1078.5 303 V471 Q1078.5 480 1087 480 H1107 V470 H1113" stroke="#222" stroke-width="3" fill="none"/>
<path d="M1113 309 H1107 V294 H1087 Q1078.5 294 1078.5 303 V471 Q1078.5 480 1087 480 H1107 V470 H1113" stroke="#e8e8e8" stroke-width="1.0" fill="none"/>
<path d="M1113 309 H1107 V294 H1087 Q1078.5 294 1078.5 303 V471 Q1078.5 480 1087 480 H1107 V470 H1113" stroke="#777" stroke-width="1.0" fill="none" stroke-dasharray="1.6 1.4"/>
<path d="M1147 309 H1153 V299 L1262 307 Q1273 308 1273 318 V456 Q1273 466 1262 467 L1153 477 V470 H1147" stroke="#222" stroke-width="3" fill="none"/>
<path d="M1147 309 H1153 V299 L1262 307 Q1273 308 1273 318 V456 Q1273 466 1262 467 L1153 477 V470 H1147" stroke="#e8e8e8" stroke-width="1.0" fill="none"/>
<path d="M1147 309 H1153 V299 L1262 307 Q1273 308 1273 318 V456 Q1273 466 1262 467 L1153 477 V470 H1147" stroke="#777" stroke-width="1.0" fill="none" stroke-dasharray="1.6 1.4"/>
<path d="M1107 294 L1153 299 M1107 480 L1153 477" stroke="#222" stroke-width="1" fill="none" stroke-dasharray="1.5 1.5" />
<path d="M1113 309 A17 17 0 0 0 1147 309" stroke="#222" stroke-width="0.8" fill="none" />
<rect x="1128" y="307.5" width="4" height="15" fill="#444" stroke="#111" stroke-width="0.6"/>
<path d="M1113 470 A17 17 0 0 1 1147 470" stroke="#222" stroke-width="0.8" fill="none" />
<rect x="1128" y="456.5" width="4" height="15" fill="#444" stroke="#111" stroke-width="0.6"/>
<line x1="1090.4" y1="309" x2="1090.4" y2="470" stroke="#222" stroke-width="3.2"/>
<line x1="1090.4" y1="309" x2="1090.4" y2="470" stroke="#e8e8e8" stroke-width="1.2"/>
<line x1="1090.4" y1="309" x2="1090.4" y2="470" stroke="#777" stroke-width="1.2" stroke-dasharray="1.6 1.4"/>
<line x1="1091" y1="311" x2="1212" y2="311" stroke="#222" stroke-width="3.2"/>
<line x1="1091" y1="311" x2="1212" y2="311" stroke="#e8e8e8" stroke-width="1.2"/>
<line x1="1091" y1="311" x2="1212" y2="311" stroke="#777" stroke-width="1.2" stroke-dasharray="1.6 1.4"/>
<line x1="1091" y1="457" x2="1212" y2="457" stroke="#222" stroke-width="3.2"/>
<line x1="1091" y1="457" x2="1212" y2="457" stroke="#e8e8e8" stroke-width="1.2"/>
<line x1="1091" y1="457" x2="1212" y2="457" stroke="#777" stroke-width="1.2" stroke-dasharray="1.6 1.4"/>
<line x1="1130" y1="311" x2="1130" y2="457" stroke="#222" stroke-width="3.2"/>
<line x1="1130" y1="311" x2="1130" y2="457" stroke="#e8e8e8" stroke-width="1.2"/>
<line x1="1130" y1="311" x2="1130" y2="457" stroke="#777" stroke-width="1.2" stroke-dasharray="1.6 1.4"/>
<line x1="1212" y1="311" x2="1212" y2="457" stroke="#222" stroke-width="3.2"/>
<line x1="1212" y1="311" x2="1212" y2="457" stroke="#e8e8e8" stroke-width="1.2"/>
<line x1="1212" y1="311" x2="1212" y2="457" stroke="#777" stroke-width="1.2" stroke-dasharray="1.6 1.4"/>
<line x1="1233" y1="311" x2="1233" y2="457" stroke="#222" stroke-width="3.2"/>
<line x1="1233" y1="311" x2="1233" y2="457" stroke="#e8e8e8" stroke-width="1.2"/>
<line x1="1233" y1="311" x2="1233" y2="457" stroke="#777" stroke-width="1.2" stroke-dasharray="1.6 1.4"/>
<line x1="1091" y1="400" x2="1233" y2="400" stroke="#222" stroke-width="3.2"/>
<line x1="1091" y1="400" x2="1233" y2="400" stroke="#e8e8e8" stroke-width="1.2"/>
<line x1="1091" y1="400" x2="1233" y2="400" stroke="#777" stroke-width="1.2" stroke-dasharray="1.6 1.4"/>
<line x1="1130" y1="360" x2="1183" y2="360" stroke="#222" stroke-width="3.2"/>
<line x1="1130" y1="360" x2="1183" y2="360" stroke="#e8e8e8" stroke-width="1.2"/>
<line x1="1130" y1="360" x2="1183" y2="360" stroke="#777" stroke-width="1.2" stroke-dasharray="1.6 1.4"/>
<line x1="1183" y1="311" x2="1183" y2="360" stroke="#222" stroke-width="3.2"/>
<line x1="1183" y1="311" x2="1183" y2="360" stroke="#e8e8e8" stroke-width="1.2"/>
<line x1="1183" y1="311" x2="1183" y2="360" stroke="#777" stroke-width="1.2" stroke-dasharray="1.6 1.4"/>
<rect x="1092" y="347" width="38" height="52" fill="none" stroke="#111" stroke-width="1.1" stroke-dasharray="1.5 1"/>
<path d="M1115 350 V395 M1120 350 V395 M1125 350 V395 M1115 356 h10 M1115 362 h10 M1115 368 h10 M1115 374 h10 M1115 380 h10 M1115 386 h10" stroke="#333" stroke-width="0.7" fill="none" />
<rect x="1134" y="345" width="10" height="13" fill="none" stroke="#333" stroke-width="0.8" stroke-dasharray="1.2 1"/>
<rect x="1146" y="345" width="10" height="13" fill="none" stroke="#333" stroke-width="0.8" stroke-dasharray="1.2 1"/>
<rect x="1158" y="345" width="10" height="13" fill="none" stroke="#333" stroke-width="0.8" stroke-dasharray="1.2 1"/>
<rect x="1170" y="345" width="10" height="13" fill="none" stroke="#333" stroke-width="0.8" stroke-dasharray="1.2 1"/>
<path d="M1215 313 L1231 398 M1231 313 L1215 398" stroke="#333" stroke-width="0.8" fill="none" />
<path d="M1240 325 L1268 363 M1268 325 L1240 363 M1240 367 L1268 406 M1268 367 L1240 406" stroke="#333" stroke-width="0.8" fill="none" />
<rect x="1240" y="325" width="28" height="38" fill="none" stroke="#333" stroke-width="0.8"/><rect x="1240" y="367" width="28" height="39" fill="none" stroke="#333" stroke-width="0.8"/>
<line x1="1233" y1="412" x2="1273" y2="412" stroke="#222" stroke-width="3.2"/>
<line x1="1233" y1="412" x2="1273" y2="412" stroke="#e8e8e8" stroke-width="1.2"/>
<line x1="1233" y1="412" x2="1273" y2="412" stroke="#777" stroke-width="1.2" stroke-dasharray="1.6 1.4"/>
<rect x="1241" y="425" width="28" height="24" fill="none" stroke="#333" stroke-width="0.8"/>
<path d="M1241 425 L1269 449 M1269 425 L1241 449" stroke="#333" stroke-width="0.7" fill="none" />
<rect x="1251" y="413" width="14" height="12" fill="none" stroke="#333" stroke-width="0.8"/>
<line x1="1150" y1="400" x2="1150" y2="457" stroke="#222" stroke-width="3.2"/>
<line x1="1150" y1="400" x2="1150" y2="457" stroke="#e8e8e8" stroke-width="1.2"/>
<line x1="1150" y1="400" x2="1150" y2="457" stroke="#777" stroke-width="1.2" stroke-dasharray="1.6 1.4"/>
<line x1="1195" y1="400" x2="1195" y2="440" stroke="#222" stroke-width="3.2"/>
<line x1="1195" y1="400" x2="1195" y2="440" stroke="#e8e8e8" stroke-width="1.2"/>
<line x1="1195" y1="400" x2="1195" y2="440" stroke="#777" stroke-width="1.2" stroke-dasharray="1.6 1.4"/>
<circle cx="1168" cy="409" r="2.8" fill="none" stroke="#222" stroke-width="1.3"/>
<circle cx="1184" cy="409" r="2.8" fill="none" stroke="#222" stroke-width="1.3"/>
<circle cx="1201" cy="409" r="2.8" fill="none" stroke="#222" stroke-width="1.3"/>
<circle cx="1227" cy="409" r="2.8" fill="none" stroke="#222" stroke-width="1.3"/>
<path d="M1163 425 v-9 h5 M1180 425 v-9 h5 M1196 425 v-9 h5" stroke="#222" stroke-width="0.9" fill="none" />
<rect x="1164" y="453" width="8" height="6" fill="none" stroke="#222" stroke-width="1.2"/><rect x="1185" y="453" width="8" height="6" fill="none" stroke="#222" stroke-width="1.2"/>
<path d="M1156 445 h45 v12 h-45 z" stroke="#222" stroke-width="1" fill="none" />
<rect x="1097" y="444" width="9" height="9" fill="none" stroke="#222" stroke-width="1.3"/>
<circle cx="1120.5" cy="309.6" r="3.5" fill="#fff" stroke="#444" stroke-width="0.7"/>
<text x="1120.5" y="310.8" font-size="3.3" font-family="Liberation Sans" fill="#666" text-anchor="middle">2</text>
<circle cx="1140" cy="309.6" r="3.5" fill="#fff" stroke="#444" stroke-width="0.7"/>
<text x="1140" y="310.8" font-size="3.3" font-family="Liberation Sans" fill="#666" text-anchor="middle">2</text>
<circle cx="1120.5" cy="470" r="3.5" fill="#fff" stroke="#444" stroke-width="0.7"/>
<text x="1120.5" y="471.2" font-size="3.3" font-family="Liberation Sans" fill="#666" text-anchor="middle">2</text>
<circle cx="1140" cy="470" r="3.5" fill="#fff" stroke="#444" stroke-width="0.7"/>
<text x="1140" y="471.2" font-size="3.3" font-family="Liberation Sans" fill="#666" text-anchor="middle">2</text>
<circle cx="1186" cy="323" r="3.5" fill="#fff" stroke="#444" stroke-width="0.7"/>
<text x="1186" y="324.2" font-size="3.3" font-family="Liberation Sans" fill="#666" text-anchor="middle">2</text>
<circle cx="1162" cy="442" r="3.5" fill="#fff" stroke="#444" stroke-width="0.7"/>
<text x="1162" y="443.2" font-size="3.3" font-family="Liberation Sans" fill="#666" text-anchor="middle">2</text>
<circle cx="1202" cy="442" r="3.5" fill="#fff" stroke="#444" stroke-width="0.7"/>
<text x="1202" y="443.2" font-size="3.3" font-family="Liberation Sans" fill="#666" text-anchor="middle">2</text>
<path d="M1235 472 L1250 489" stroke="#333" stroke-width="0.8" fill="none" />
<circle cx="1262" cy="490" r="8.5" fill="#fff" stroke="#333" stroke-width="0.9"/>
<line x1="1254" y1="490" x2="1270" y2="490" stroke="#333" stroke-width="0.7" />
<text x="1262" y="496" font-size="4" font-family="Liberation Sans" fill="#333" text-anchor="middle">A6.02</text>
<path d="M1487 310 H1493 V294 H1513 Q1522 294 1522 303 V470 Q1522 479 1513 479 H1493 V470 H1487" stroke="#222" stroke-width="3" fill="none"/>
<path d="M1487 310 H1493 V294 H1513 Q1522 294 1522 303 V470 Q1522 479 1513 479 H1493 V470 H1487" stroke="#e8e8e8" stroke-width="1.0" fill="none"/>
<path d="M1487 310 H1493 V294 H1513 Q1522 294 1522 303 V470 Q1522 479 1513 479 H1493 V470 H1487" stroke="#777" stroke-width="1.0" fill="none" stroke-dasharray="1.6 1.4"/>
<path d="M1453 310 H1447 V298 L1339 305 Q1327 306 1327 316 V455 Q1327 465 1339 466 L1447 477 V470 H1453" stroke="#222" stroke-width="3" fill="none"/>
<path d="M1453 310 H1447 V298 L1339 305 Q1327 306 1327 316 V455 Q1327 465 1339 466 L1447 477 V470 H1453" stroke="#e8e8e8" stroke-width="1.0" fill="none"/>
<path d="M1453 310 H1447 V298 L1339 305 Q1327 306 1327 316 V455 Q1327 465 1339 466 L1447 477 V470 H1453" stroke="#777" stroke-width="1.0" fill="none" stroke-dasharray="1.6 1.4"/>
<path d="M1493 294 L1447 298 M1493 479 L1447 477" stroke="#222" stroke-width="1" fill="none" stroke-dasharray="1.5 1.5" />
<path d="M1453 310 A17 17 0 0 0 1487 310" stroke="#222" stroke-width="0.8" fill="none" />
<rect x="1468" y="308.5" width="4" height="15" fill="#444" stroke="#111" stroke-width="0.6"/>
<path d="M1453 470 A17 17 0 0 1 1487 470" stroke="#222" stroke-width="0.8" fill="none" />
<rect x="1468" y="456.5" width="4" height="15" fill="#444" stroke="#111" stroke-width="0.6"/>
<line x1="1366" y1="310" x2="1366" y2="457" stroke="#222" stroke-width="3.2"/>
<line x1="1366" y1="310" x2="1366" y2="457" stroke="#e8e8e8" stroke-width="1.2"/>
<line x1="1366" y1="310" x2="1366" y2="457" stroke="#777" stroke-width="1.2" stroke-dasharray="1.6 1.4"/>
<line x1="1486" y1="320" x2="1486" y2="457" stroke="#222" stroke-width="3.2"/>
<line x1="1486" y1="320" x2="1486" y2="457" stroke="#e8e8e8" stroke-width="1.2"/>
<line x1="1486" y1="320" x2="1486" y2="457" stroke="#777" stroke-width="1.2" stroke-dasharray="1.6 1.4"/>
<line x1="1512" y1="310" x2="1512" y2="470" stroke="#222" stroke-width="3.2"/>
<line x1="1512" y1="310" x2="1512" y2="470" stroke="#e8e8e8" stroke-width="1.2"/>
<line x1="1512" y1="310" x2="1512" y2="470" stroke="#777" stroke-width="1.2" stroke-dasharray="1.6 1.4"/>
<line x1="1366" y1="312" x2="1486" y2="312" stroke="#222" stroke-width="3.2"/>
<line x1="1366" y1="312" x2="1486" y2="312" stroke="#e8e8e8" stroke-width="1.2"/>
<line x1="1366" y1="312" x2="1486" y2="312" stroke="#777" stroke-width="1.2" stroke-dasharray="1.6 1.4"/>
<line x1="1366" y1="400" x2="1486" y2="400" stroke="#222" stroke-width="3.2"/>
<line x1="1366" y1="400" x2="1486" y2="400" stroke="#e8e8e8" stroke-width="1.2"/>
<line x1="1366" y1="400" x2="1486" y2="400" stroke="#777" stroke-width="1.2" stroke-dasharray="1.6 1.4"/>
<line x1="1327" y1="412" x2="1366" y2="412" stroke="#222" stroke-width="3.2"/>
<line x1="1327" y1="412" x2="1366" y2="412" stroke="#e8e8e8" stroke-width="1.2"/>
<line x1="1327" y1="412" x2="1366" y2="412" stroke="#777" stroke-width="1.2" stroke-dasharray="1.6 1.4"/>
<line x1="1486" y1="373" x2="1512" y2="373" stroke="#222" stroke-width="3.2"/>
<line x1="1486" y1="373" x2="1512" y2="373" stroke="#e8e8e8" stroke-width="1.2"/>
<line x1="1486" y1="373" x2="1512" y2="373" stroke="#777" stroke-width="1.2" stroke-dasharray="1.6 1.4"/>
<line x1="1327" y1="457" x2="1520" y2="457" stroke="#222" stroke-width="3.2"/>
<line x1="1327" y1="457" x2="1520" y2="457" stroke="#e8e8e8" stroke-width="1.2"/>
<line x1="1327" y1="457" x2="1520" y2="457" stroke="#777" stroke-width="1.2" stroke-dasharray="1.6 1.4"/>
<path d="M1331 325.5 L1360.6 363 M1360.6 325.5 L1331 363" stroke="#444" stroke-width="0.7" fill="none" />
<rect x="1331" y="367" width="29.6" height="38" fill="none" stroke="#333" stroke-width="0.9"/>
<path d="M1331 367 L1360.6 405 M1360.6 367 L1331 405" stroke="#333" stroke-width="0.7" fill="none" />
<rect x="1334" y="428" width="24" height="22" fill="none" stroke="#333" stroke-width="0.9"/>
<path d="M1334 450 L1358 428" stroke="#333" stroke-width="0.7" fill="none" />
<rect x="1375" y="328" width="25" height="54" fill="none" stroke="#333" stroke-width="0.7" stroke-dasharray="1.5 1"/>
<path d="M1381 328 v54 M1387 328 v54 M1375 346 h25 M1375 364 h25" stroke="#222" stroke-width="0.8" fill="none" />
<rect x="1404" y="328" width="25" height="54" fill="none" stroke="#333" stroke-width="0.7" stroke-dasharray="1.5 1"/>
<path d="M1410 328 v54 M1416 328 v54 M1404 346 h25 M1404 364 h25" stroke="#222" stroke-width="0.8" fill="none" />
<rect x="1433" y="328" width="25" height="54" fill="none" stroke="#333" stroke-width="0.7" stroke-dasharray="1.5 1"/>
<path d="M1439 328 v54 M1445 328 v54 M1433 346 h25 M1433 364 h25" stroke="#222" stroke-width="0.8" fill="none" />
<rect x="1488" y="375" width="23" height="35" fill="none" stroke="#111" stroke-width="1.1" stroke-dasharray="1.5 1"/>
<path d="M1495 385 V410 M1503 385 V410 M1495 390 h8 M1495 396 h8 M1495 402 h8" stroke="#333" stroke-width="0.8" fill="none" />
<circle cx="1374" cy="408" r="2.8" fill="none" stroke="#222" stroke-width="1.3"/>
<circle cx="1402" cy="408" r="2.8" fill="none" stroke="#222" stroke-width="1.3"/>
<rect x="1400" y="404" width="25" height="23" fill="none" stroke="#444" stroke-width="0.8" stroke-dasharray="2 1.5"/>
<rect x="1399" y="453" width="8" height="6" fill="none" stroke="#222" stroke-width="1.2"/><rect x="1420" y="453" width="8" height="6" fill="none" stroke="#222" stroke-width="1.2"/>
<path d="M1392 445 h44 v12 h-44 z" stroke="#222" stroke-width="1" fill="none" />
<circle cx="1460" cy="310" r="3.5" fill="#fff" stroke="#444" stroke-width="0.7"/>
<text x="1460" y="311.2" font-size="3.3" font-family="Liberation Sans" fill="#666" text-anchor="middle">2</text>
<circle cx="1480" cy="310" r="3.5" fill="#fff" stroke="#444" stroke-width="0.7"/>
<text x="1480" y="311.2" font-size="3.3" font-family="Liberation Sans" fill="#666" text-anchor="middle">2</text>
<circle cx="1460" cy="470" r="3.5" fill="#fff" stroke="#444" stroke-width="0.7"/>
<text x="1460" y="471.2" font-size="3.3" font-family="Liberation Sans" fill="#666" text-anchor="middle">2</text>
<circle cx="1480" cy="470" r="3.5" fill="#fff" stroke="#444" stroke-width="0.7"/>
<text x="1480" y="471.2" font-size="3.3" font-family="Liberation Sans" fill="#666" text-anchor="middle">2</text>
<circle cx="1392" cy="441" r="3.5" fill="#fff" stroke="#444" stroke-width="0.7"/>
<text x="1392" y="442.2" font-size="3.3" font-family="Liberation Sans" fill="#666" text-anchor="middle">2</text>
<circle cx="1466" cy="434" r="3.5" fill="#fff" stroke="#444" stroke-width="0.7"/>
<text x="1466" y="435.2" font-size="3.3" font-family="Liberation Sans" fill="#666" text-anchor="middle">2</text>
<rect x="1522.7" y="322" width="54" height="129.7" rx="10" fill="none" stroke="#222" stroke-width="2.2"/>
<line x1="1512" y1="387.5" x2="1577" y2="387.5" stroke="#222" stroke-width="3"/>
<line x1="1512" y1="387.5" x2="1577" y2="387.5" stroke="#e8e8e8" stroke-width="1.0"/>
<line x1="1512" y1="387.5" x2="1577" y2="387.5" stroke="#777" stroke-width="1.0" stroke-dasharray="1.6 1.4"/>
<path d="M1576.8 370.5 A17 17 0 0 0 1576.8 404.5" fill="none" stroke="#222" stroke-width="0.8"/>
<rect x="1563.8" y="385.0" width="13" height="5" rx="1.5" fill="#ddd" stroke="#111" stroke-width="1.1"/>
<circle cx="1576.5" cy="378.0" r="4.3" fill="#fff" stroke="#444" stroke-width="0.7"/>
<text x="1576.5" y="379.2" font-size="3.3" font-family="Liberation Sans" fill="#666" text-anchor="middle">2</text>
<circle cx="1576.5" cy="397.0" r="4.3" fill="#fff" stroke="#444" stroke-width="0.7"/>
<text x="1576.5" y="398.2" font-size="3.3" font-family="Liberation Sans" fill="#666" text-anchor="middle">2</text>
<path d="M1577 321 H1608 M1577 453 H1608" stroke="#222" stroke-width="1.1" fill="none" />
<path d="M1522 309 H1608 M1522 465 H1608" stroke="#333" stroke-width="0.9" fill="none" stroke-dasharray="1.5 1.3" />
<path d="M1273 309 H1327 M1273 465 H1327" stroke="#333" stroke-width="0.9" fill="none" stroke-dasharray="1.5 1.3" />
<path d="M730 490 L911 504" stroke="#222" stroke-width="1" fill="none" />
<path d="M911 504 L1300 534 L1608 504" stroke="#222" stroke-width="0.9" fill="none" stroke-dasharray="1.5 1.5" />
<path d="M821 613 V507.4 Q821 498.4 830 498.4 L909.4 504 Q918.4 504 918.4 513 V613" stroke="#222" stroke-width="3.2" fill="none"/>
<path d="M821 613 V507.4 Q821 498.4 830 498.4 L909.4 504 Q918.4 504 918.4 513 V613" stroke="#e8e8e8" stroke-width="1.2" fill="none"/>
<path d="M821 613 V507.4 Q821 498.4 830 498.4 L909.4 504 Q918.4 504 918.4 513 V613" stroke="#777" stroke-width="1.2" fill="none" stroke-dasharray="1.6 1.4"/>
<line x1="821" y1="554" x2="918.4" y2="554" stroke="#222" stroke-width="3"/>
<line x1="821" y1="554" x2="918.4" y2="554" stroke="#e8e8e8" stroke-width="1.0"/>
<line x1="821" y1="554" x2="918.4" y2="554" stroke="#777" stroke-width="1.0" stroke-dasharray="1.6 1.4"/>
<path d="M918.4 537 A17 17 0 0 0 918.4 571" fill="none" stroke="#222" stroke-width="0.8"/>
<rect x="905.4" y="551.5" width="13" height="5" rx="1.5" fill="#ddd" stroke="#111" stroke-width="1.1"/>
<circle cx="918.1" cy="544.5" r="4.3" fill="#fff" stroke="#444" stroke-width="0.7"/>
<text x="918.1" y="545.7" font-size="3.3" font-family="Liberation Sans" fill="#666" text-anchor="middle">2</text>
<circle cx="918.1" cy="563.5" r="4.3" fill="#fff" stroke="#444" stroke-width="0.7"/>
<text x="918.1" y="564.7" font-size="3.3" font-family="Liberation Sans" fill="#666" text-anchor="middle">2</text>
<path d="M965 613 V517.8 Q965 508.8 974 508.8 L1052.4 514.7 Q1061.4 514.7 1061.4 523.7 V613" stroke="#222" stroke-width="3.2" fill="none"/>
<path d="M965 613 V517.8 Q965 508.8 974 508.8 L1052.4 514.7 Q1061.4 514.7 1061.4 523.7 V613" stroke="#e8e8e8" stroke-width="1.2" fill="none"/>
<path d="M965 613 V517.8 Q965 508.8 974 508.8 L1052.4 514.7 Q1061.4 514.7 1061.4 523.7 V613" stroke="#777" stroke-width="1.2" fill="none" stroke-dasharray="1.6 1.4"/>
<line x1="1013.5" y1="511.75" x2="1013.5" y2="613" stroke="#222" stroke-width="3.2"/>
<line x1="1013.5" y1="511.75" x2="1013.5" y2="613" stroke="#e8e8e8" stroke-width="1.2"/>
<line x1="1013.5" y1="511.75" x2="1013.5" y2="613" stroke="#777" stroke-width="1.2" stroke-dasharray="1.6 1.4"/>
<line x1="965" y1="563.5" x2="1061.4" y2="563.5" stroke="#222" stroke-width="3"/>
<line x1="965" y1="563.5" x2="1061.4" y2="563.5" stroke="#e8e8e8" stroke-width="1.0"/>
<line x1="965" y1="563.5" x2="1061.4" y2="563.5" stroke="#777" stroke-width="1.0" stroke-dasharray="1.6 1.4"/>
<path d="M965 546.5 A17 17 0 0 1 965 580.5" fill="none" stroke="#222" stroke-width="0.8"/>
<rect x="965" y="561.0" width="13" height="5" rx="1.5" fill="#ddd" stroke="#111" stroke-width="1.1"/>
<circle cx="965.3" cy="554.0" r="4.3" fill="#fff" stroke="#444" stroke-width="0.7"/>
<text x="965.3" y="555.2" font-size="3.3" font-family="Liberation Sans" fill="#666" text-anchor="middle">2</text>
<circle cx="965.3" cy="573.0" r="4.3" fill="#fff" stroke="#444" stroke-width="0.7"/>
<text x="965.3" y="574.2" font-size="3.3" font-family="Liberation Sans" fill="#666" text-anchor="middle">2</text>
<path d="M1061.4 546.5 A17 17 0 0 0 1061.4 580.5" fill="none" stroke="#222" stroke-width="0.8"/>
<rect x="1048.4" y="561.0" width="13" height="5" rx="1.5" fill="#ddd" stroke="#111" stroke-width="1.1"/>
<circle cx="1061.1000000000001" cy="554.0" r="4.3" fill="#fff" stroke="#444" stroke-width="0.7"/>
<text x="1061.1000000000001" y="555.2" font-size="3.3" font-family="Liberation Sans" fill="#666" text-anchor="middle">2</text>
<circle cx="1061.1000000000001" cy="573.0" r="4.3" fill="#fff" stroke="#444" stroke-width="0.7"/>
<text x="1061.1000000000001" y="574.2" font-size="3.3" font-family="Liberation Sans" fill="#666" text-anchor="middle">2</text>
<path d="M1108.8 613 V528 Q1108.8 519 1117.8 519 L1196 525.6 Q1205 525.6 1205 534.6 V613" stroke="#222" stroke-width="3.2" fill="none"/>
<path d="M1108.8 613 V528 Q1108.8 519 1117.8 519 L1196 525.6 Q1205 525.6 1205 534.6 V613" stroke="#e8e8e8" stroke-width="1.2" fill="none"/>
<path d="M1108.8 613 V528 Q1108.8 519 1117.8 519 L1196 525.6 Q1205 525.6 1205 534.6 V613" stroke="#777" stroke-width="1.2" fill="none" stroke-dasharray="1.6 1.4"/>
<line x1="1157" y1="522.3" x2="1157" y2="613" stroke="#222" stroke-width="3.2"/>
<line x1="1157" y1="522.3" x2="1157" y2="613" stroke="#e8e8e8" stroke-width="1.2"/>
<line x1="1157" y1="522.3" x2="1157" y2="613" stroke="#777" stroke-width="1.2" stroke-dasharray="1.6 1.4"/>
<line x1="1108.8" y1="563.5" x2="1205" y2="563.5" stroke="#222" stroke-width="3"/>
<line x1="1108.8" y1="563.5" x2="1205" y2="563.5" stroke="#e8e8e8" stroke-width="1.0"/>
<line x1="1108.8" y1="563.5" x2="1205" y2="563.5" stroke="#777" stroke-width="1.0" stroke-dasharray="1.6 1.4"/>
<path d="M1108.8 546.5 A17 17 0 0 1 1108.8 580.5" fill="none" stroke="#222" stroke-width="0.8"/>
<rect x="1108.8" y="561.0" width="13" height="5" rx="1.5" fill="#ddd" stroke="#111" stroke-width="1.1"/>
<circle cx="1109.1" cy="554.0" r="4.3" fill="#fff" stroke="#444" stroke-width="0.7"/>
<text x="1109.1" y="555.2" font-size="3.3" font-family="Liberation Sans" fill="#666" text-anchor="middle">2</text>
<circle cx="1109.1" cy="573.0" r="4.3" fill="#fff" stroke="#444" stroke-width="0.7"/>
<text x="1109.1" y="574.2" font-size="3.3" font-family="Liberation Sans" fill="#666" text-anchor="middle">2</text>
<path d="M1205 546.5 A17 17 0 0 0 1205 580.5" fill="none" stroke="#222" stroke-width="0.8"/>
<rect x="1192" y="561.0" width="13" height="5" rx="1.5" fill="#ddd" stroke="#111" stroke-width="1.1"/>
<circle cx="1204.7" cy="554.0" r="4.3" fill="#fff" stroke="#444" stroke-width="0.7"/>
<text x="1204.7" y="555.2" font-size="3.3" font-family="Liberation Sans" fill="#666" text-anchor="middle">2</text>
<circle cx="1204.7" cy="573.0" r="4.3" fill="#fff" stroke="#444" stroke-width="0.7"/>
<text x="1204.7" y="574.2" font-size="3.3" font-family="Liberation Sans" fill="#666" text-anchor="middle">2</text>
<path d="M1397 613 V535.7 Q1397 526.7 1406 526.7 L1484.3 519 Q1493.3 519 1493.3 528 V613" stroke="#222" stroke-width="3.2" fill="none"/>
<path d="M1397 613 V535.7 Q1397 526.7 1406 526.7 L1484.3 519 Q1493.3 519 1493.3 528 V613" stroke="#e8e8e8" stroke-width="1.2" fill="none"/>
<path d="M1397 613 V535.7 Q1397 526.7 1406 526.7 L1484.3 519 Q1493.3 519 1493.3 528 V613" stroke="#777" stroke-width="1.2" fill="none" stroke-dasharray="1.6 1.4"/>
<line x1="1444.3" y1="522.85" x2="1444.3" y2="613" stroke="#222" stroke-width="3.2"/>
<line x1="1444.3" y1="522.85" x2="1444.3" y2="613" stroke="#e8e8e8" stroke-width="1.2"/>
<line x1="1444.3" y1="522.85" x2="1444.3" y2="613" stroke="#777" stroke-width="1.2" stroke-dasharray="1.6 1.4"/>
<line x1="1397" y1="563.5" x2="1493.3" y2="563.5" stroke="#222" stroke-width="3"/>
<line x1="1397" y1="563.5" x2="1493.3" y2="563.5" stroke="#e8e8e8" stroke-width="1.0"/>
<line x1="1397" y1="563.5" x2="1493.3" y2="563.5" stroke="#777" stroke-width="1.0" stroke-dasharray="1.6 1.4"/>
<path d="M1397 546.5 A17 17 0 0 1 1397 580.5" fill="none" stroke="#222" stroke-width="0.8"/>
<rect x="1397" y="561.0" width="13" height="5" rx="1.5" fill="#ddd" stroke="#111" stroke-width="1.1"/>
<circle cx="1397.3" cy="554.0" r="4.3" fill="#fff" stroke="#444" stroke-width="0.7"/>
<text x="1397.3" y="555.2" font-size="3.3" font-family="Liberation Sans" fill="#666" text-anchor="middle">2</text>
<circle cx="1397.3" cy="573.0" r="4.3" fill="#fff" stroke="#444" stroke-width="0.7"/>
<text x="1397.3" y="574.2" font-size="3.3" font-family="Liberation Sans" fill="#666" text-anchor="middle">2</text>
<path d="M1493.3 546.5 A17 17 0 0 0 1493.3 580.5" fill="none" stroke="#222" stroke-width="0.8"/>
<rect x="1480.3" y="561.0" width="13" height="5" rx="1.5" fill="#ddd" stroke="#111" stroke-width="1.1"/>
<circle cx="1493.0" cy="554.0" r="4.3" fill="#fff" stroke="#444" stroke-width="0.7"/>
<text x="1493.0" y="555.2" font-size="3.3" font-family="Liberation Sans" fill="#666" text-anchor="middle">2</text>
<circle cx="1493.0" cy="573.0" r="4.3" fill="#fff" stroke="#444" stroke-width="0.7"/>
<text x="1493.0" y="574.2" font-size="3.3" font-family="Liberation Sans" fill="#666" text-anchor="middle">2</text>
<path d="M1540 613 V523.5 Q1540 514.5 1549 514.5 L1631 508 Q1640 508 1640 517 V613" stroke="#222" stroke-width="3.2" fill="none"/>
<path d="M1540 613 V523.5 Q1540 514.5 1549 514.5 L1631 508 Q1640 508 1640 517 V613" stroke="#e8e8e8" stroke-width="1.2" fill="none"/>
<path d="M1540 613 V523.5 Q1540 514.5 1549 514.5 L1631 508 Q1640 508 1640 517 V613" stroke="#777" stroke-width="1.2" fill="none" stroke-dasharray="1.6 1.4"/>
<line x1="1588" y1="511.25" x2="1588" y2="613" stroke="#222" stroke-width="3.2"/>
<line x1="1588" y1="511.25" x2="1588" y2="613" stroke="#e8e8e8" stroke-width="1.2"/>
<line x1="1588" y1="511.25" x2="1588" y2="613" stroke="#777" stroke-width="1.2" stroke-dasharray="1.6 1.4"/>
<line x1="1540" y1="563.5" x2="1640" y2="563.5" stroke="#222" stroke-width="3"/>
<line x1="1540" y1="563.5" x2="1640" y2="563.5" stroke="#e8e8e8" stroke-width="1.0"/>
<line x1="1540" y1="563.5" x2="1640" y2="563.5" stroke="#777" stroke-width="1.0" stroke-dasharray="1.6 1.4"/>
<path d="M1540 546.5 A17 17 0 0 1 1540 580.5" fill="none" stroke="#222" stroke-width="0.8"/>
<rect x="1540" y="561.0" width="13" height="5" rx="1.5" fill="#ddd" stroke="#111" stroke-width="1.1"/>
<circle cx="1540.3" cy="554.0" r="4.3" fill="#fff" stroke="#444" stroke-width="0.7"/>
<text x="1540.3" y="555.2" font-size="3.3" font-family="Liberation Sans" fill="#666" text-anchor="middle">2</text>
<circle cx="1540.3" cy="573.0" r="4.3" fill="#fff" stroke="#444" stroke-width="0.7"/>
<text x="1540.3" y="574.2" font-size="3.3" font-family="Liberation Sans" fill="#666" text-anchor="middle">2</text>
<path d="M1209 517.4 H1393 Q1400.7 517.4 1400.7 525 V617 Q1400.7 624.6 1393 624.6 H1209 Q1201 624.6 1201 617 V525 Q1201 517.4 1209 517.4 Z" stroke="#333" stroke-width="1" fill="none" stroke-dasharray="3.5 2" />
<path d="M1229 527 L1300 534 L1372 527 V550 H1229 Z" stroke="#222" stroke-width="1.3" fill="none" />
<line x1="1229" y1="537" x2="1372" y2="537" stroke="#222" stroke-width="2.6"/>
<line x1="1229" y1="537" x2="1372" y2="537" stroke="#e8e8e8" stroke-width="0.6"/>
<line x1="1229" y1="537" x2="1372" y2="537" stroke="#777" stroke-width="0.6" stroke-dasharray="1.6 1.4"/>
<rect x="1232" y="539" width="16" height="10" fill="none" stroke="#222" stroke-width="1.1"/><rect x="1353" y="539" width="16" height="10" fill="none" stroke="#222" stroke-width="1.1"/>
<rect x="1260" y="541" width="85" height="6" fill="none" stroke="#444" stroke-width="0.7" stroke-dasharray="1.5 1"/><rect x="1294" y="541" width="11" height="6" fill="none" stroke="#222" stroke-width="0.9"/>
<rect x="1256" y="556" width="89" height="29" fill="none" stroke="#333" stroke-width="0.9" stroke-dasharray="1.3 1"/>
<rect x="1257" y="563" width="87" height="14" fill="none" stroke="#333" stroke-width="1"/>
<rect x="1222" y="596" width="157" height="13" fill="none" stroke="#222" stroke-width="1"/>
<rect x="1222" y="596" width="13" height="13" fill="none" stroke="#222" stroke-width="1.5"/><rect x="1366" y="596" width="13" height="13" fill="none" stroke="#222" stroke-width="1.5"/>
<path d="M1400 625 L1408 635" stroke="#333" stroke-width="0.8" fill="none" />
<circle cx="1414" cy="642" r="9" fill="#fff" stroke="#333" stroke-width="0.9"/>
<line x1="1405" y1="642" x2="1423" y2="642" stroke="#333" stroke-width="0.7" />
<text x="1414" y="640" font-size="4" font-family="Liberation Sans" fill="#333" text-anchor="middle">01</text><text x="1414" y="647.5" font-size="4" font-family="Liberation Sans" fill="#333" text-anchor="middle">A6.01</text>
<path d="M1608 160.3 H642.5 V613.3 H1608" stroke="#0a0a0a" stroke-width="3" fill="none" />
<g><text x="726.6" y="220.71" font-size="6.8" font-family="Liberation Sans" font-weight="bold" fill="#111" text-anchor="middle" textLength="50" lengthAdjust="spacingAndGlyphs">OPEN OFFICE  200</text><line x1="701.6" y1="222.21" x2="751.6" y2="222.21" stroke="#111" stroke-width="1.1"/></g>
<g><text x="844" y="185.11" font-size="6.8" font-family="Liberation Sans" font-weight="bold" fill="#111" text-anchor="middle" textLength="38" lengthAdjust="spacingAndGlyphs">MEETING  201</text><line x1="825.0" y1="186.61" x2="863.0" y2="186.61" stroke="#111" stroke-width="1.1"/></g>
<g><text x="893.7" y="185.11" font-size="6.8" font-family="Liberation Sans" font-weight="bold" fill="#111" text-anchor="middle" textLength="38" lengthAdjust="spacingAndGlyphs">MEETING  203</text><line x1="874.7" y1="186.61" x2="912.7" y2="186.61" stroke="#111" stroke-width="1.1"/></g>
<g><text x="846" y="243.31" font-size="6.8" font-family="Liberation Sans" font-weight="bold" fill="#111" text-anchor="middle" textLength="38" lengthAdjust="spacingAndGlyphs">MEETING  202</text><line x1="827.0" y1="244.81" x2="865.0" y2="244.81" stroke="#111" stroke-width="1.1"/></g>
<g><text x="894" y="243.31" font-size="6.8" font-family="Liberation Sans" font-weight="bold" fill="#111" text-anchor="middle" textLength="38" lengthAdjust="spacingAndGlyphs">MEETING  204</text><line x1="875.0" y1="244.81" x2="913.0" y2="244.81" stroke="#111" stroke-width="1.1"/></g>
<g><text x="1012" y="187.91" font-size="6.8" font-family="Liberation Sans" font-weight="bold" fill="#111" text-anchor="middle" textLength="34" lengthAdjust="spacingAndGlyphs">OFFICE  205</text><line x1="995.0" y1="189.41" x2="1029.0" y2="189.41" stroke="#111" stroke-width="1.1"/></g>
<g><text x="1012" y="238.91" font-size="6.8" font-family="Liberation Sans" font-weight="bold" fill="#111" text-anchor="middle" textLength="34" lengthAdjust="spacingAndGlyphs">OFFICE  206</text><line x1="995.0" y1="240.41" x2="1029.0" y2="240.41" stroke="#111" stroke-width="1.1"/></g>
<g><text x="1145" y="207.91" font-size="6.8" font-family="Liberation Sans" font-weight="bold" fill="#111" text-anchor="middle" textLength="51" lengthAdjust="spacingAndGlyphs">CONFERENCE  207</text><line x1="1119.5" y1="209.41" x2="1170.5" y2="209.41" stroke="#111" stroke-width="1.1"/></g>
<g><text x="1264" y="208.31" font-size="6.8" font-family="Liberation Sans" font-weight="bold" fill="#111" text-anchor="middle" textLength="38" lengthAdjust="spacingAndGlyphs">MEETING  208</text><line x1="1245.0" y1="209.81" x2="1283.0" y2="209.81" stroke="#111" stroke-width="1.1"/></g>
<g><text x="1338" y="208.31" font-size="6.8" font-family="Liberation Sans" font-weight="bold" fill="#111" text-anchor="middle" textLength="38" lengthAdjust="spacingAndGlyphs">MEETING  209</text><line x1="1319.0" y1="209.81" x2="1357.0" y2="209.81" stroke="#111" stroke-width="1.1"/></g>
<g><text x="1408" y="204.81" font-size="6.8" font-family="Liberation Sans" font-weight="bold" fill="#111" text-anchor="middle" textLength="37.5" lengthAdjust="spacingAndGlyphs">MEETING  210</text><line x1="1389.2" y1="206.31" x2="1426.8" y2="206.31" stroke="#111" stroke-width="1.1"/></g>
<g><text x="1491" y="205.81" font-size="6.8" font-family="Liberation Sans" font-weight="bold" fill="#111" text-anchor="middle" textLength="51" lengthAdjust="spacingAndGlyphs">CONFERENCE  211</text><line x1="1465.5" y1="207.31" x2="1516.5" y2="207.31" stroke="#111" stroke-width="1.1"/></g>
<g><text x="1583" y="189.31" font-size="6.8" font-family="Liberation Sans" font-weight="bold" fill="#111" text-anchor="middle" textLength="34" lengthAdjust="spacingAndGlyphs">OFFICE  212</text><line x1="1566.0" y1="190.81" x2="1600.0" y2="190.81" stroke="#111" stroke-width="1.1"/></g>
<g><text x="1583" y="239.31" font-size="6.8" font-family="Liberation Sans" font-weight="bold" fill="#111" text-anchor="middle" textLength="34" lengthAdjust="spacingAndGlyphs">OFFICE  213</text><line x1="1566.0" y1="240.81" x2="1600.0" y2="240.81" stroke="#111" stroke-width="1.1"/></g>
<g><text x="1303" y="280.31" font-size="6.8" font-family="Liberation Sans" font-weight="bold" fill="#111" text-anchor="middle" textLength="43" lengthAdjust="spacingAndGlyphs">RECEPTION  255</text><line x1="1281.5" y1="281.81" x2="1324.5" y2="281.81" stroke="#111" stroke-width="1.1"/></g>
<g><text x="687" y="314.91" font-size="6.8" font-family="Liberation Sans" font-weight="bold" fill="#111" text-anchor="middle" textLength="38" lengthAdjust="spacingAndGlyphs">MEETING  247</text><line x1="668.0" y1="316.41" x2="706.0" y2="316.41" stroke="#111" stroke-width="1.1"/></g>
<g><text x="690" y="391.31" font-size="6.8" font-family="Liberation Sans" font-weight="bold" fill="#111" text-anchor="middle" textLength="47" lengthAdjust="spacingAndGlyphs">CONFERENCE  246</text><line x1="666.5" y1="392.81" x2="713.5" y2="392.81" stroke="#111" stroke-width="1.1"/></g>
<g><text x="690" y="464.31" font-size="6.8" font-family="Liberation Sans" font-weight="bold" fill="#111" text-anchor="middle" textLength="38" lengthAdjust="spacingAndGlyphs">MEETING  245</text><line x1="671.0" y1="465.81" x2="709.0" y2="465.81" stroke="#111" stroke-width="1.1"/></g>
<g><text x="900" y="391.31" font-size="6.8" font-family="Liberation Sans" font-weight="bold" fill="#111" text-anchor="middle" textLength="50" lengthAdjust="spacingAndGlyphs">OPEN OFFICE  248</text><line x1="875.0" y1="392.81" x2="925.0" y2="392.81" stroke="#111" stroke-width="1.1"/></g>
<g><text x="1055" y="355.31" font-size="6.8" font-family="Liberation Sans" font-weight="bold" fill="#111" text-anchor="middle" textLength="34" lengthAdjust="spacingAndGlyphs">OFFICE  249</text><line x1="1038.0" y1="356.81" x2="1072.0" y2="356.81" stroke="#111" stroke-width="1.1"/></g>
<g><text x="1053" y="419.31" font-size="6.8" font-family="Liberation Sans" font-weight="bold" fill="#111" text-anchor="middle" textLength="29" lengthAdjust="spacingAndGlyphs">COPY  250</text><line x1="1038.5" y1="420.81" x2="1067.5" y2="420.81" stroke="#111" stroke-width="1.1"/></g>
<g><text x="1110" y="334.81" font-size="6.8" font-family="Liberation Sans" font-weight="bold" fill="#111" text-anchor="middle" textLength="29.6" lengthAdjust="spacingAndGlyphs">STAIR  251</text><line x1="1095.2" y1="336.31" x2="1124.8" y2="336.31" stroke="#111" stroke-width="1.1"/></g>
<g><text x="1156.5" y="334.81" font-size="6.8" font-family="Liberation Sans" font-weight="bold" fill="#111" text-anchor="middle" textLength="47.6" lengthAdjust="spacingAndGlyphs">ELECTRICAL  253</text><line x1="1132.7" y1="336.31" x2="1180.3" y2="336.31" stroke="#111" stroke-width="1.1"/></g>
<g><text x="1171.7" y="372.31" font-size="6.8" font-family="Liberation Sans" font-weight="bold" fill="#111" text-anchor="middle" textLength="43.4" lengthAdjust="spacingAndGlyphs">STORAGE  253A</text><line x1="1150.0" y1="373.81" x2="1193.4" y2="373.81" stroke="#111" stroke-width="1.1"/></g>
<g><text x="1163" y="391.51" font-size="6.8" font-family="Liberation Sans" font-weight="bold" fill="#111" text-anchor="middle" textLength="44.5" lengthAdjust="spacingAndGlyphs">STORAGE  254A</text><line x1="1140.8" y1="393.01" x2="1185.2" y2="393.01" stroke="#111" stroke-width="1.1"/></g>
<g><text x="1183" y="444.11" font-size="6.8" font-family="Liberation Sans" font-weight="bold" fill="#111" text-anchor="middle" textLength="48.6" lengthAdjust="spacingAndGlyphs">WOMEN'S RR  254</text><line x1="1158.7" y1="445.61" x2="1207.3" y2="445.61" stroke="#111" stroke-width="1.1"/></g>
<g><text x="1300" y="384.01" font-size="6.8" font-family="Liberation Sans" font-weight="bold" fill="#111" text-anchor="middle" textLength="32.7" lengthAdjust="spacingAndGlyphs">LOBBY  256</text><line x1="1283.7" y1="385.51" x2="1316.3" y2="385.51" stroke="#111" stroke-width="1.1"/></g>
<g><text x="1418.7" y="319.71" font-size="6.8" font-family="Liberation Sans" font-weight="bold" fill="#111" text-anchor="middle" textLength="35.4" lengthAdjust="spacingAndGlyphs">SERVER  257</text><line x1="1401.0" y1="321.21" x2="1436.4" y2="321.21" stroke="#111" stroke-width="1.1"/></g>
<g><text x="1440" y="395.51" font-size="6.8" font-family="Liberation Sans" font-weight="bold" fill="#111" text-anchor="middle" textLength="43.7" lengthAdjust="spacingAndGlyphs">STORAGE  258A</text><line x1="1418.2" y1="397.01" x2="1461.8" y2="397.01" stroke="#111" stroke-width="1.1"/></g>
<g><text x="1421" y="444.71" font-size="6.8" font-family="Liberation Sans" font-weight="bold" fill="#111" text-anchor="middle" textLength="40.5" lengthAdjust="spacingAndGlyphs">MEN'S RR  258</text><line x1="1400.8" y1="446.21" x2="1441.2" y2="446.21" stroke="#111" stroke-width="1.1"/></g>
<g><text x="1490.6" y="444.71" font-size="6.8" font-family="Liberation Sans" font-weight="bold" fill="#111" text-anchor="middle" textLength="29" lengthAdjust="spacingAndGlyphs">STAIR  259</text><line x1="1476.1" y1="446.21" x2="1505.1" y2="446.21" stroke="#111" stroke-width="1.1"/></g>
<g><text x="1546" y="354.31" font-size="6.8" font-family="Liberation Sans" font-weight="bold" fill="#111" text-anchor="middle" textLength="30" lengthAdjust="spacingAndGlyphs">OFFICE  261</text><line x1="1531.0" y1="355.81" x2="1561.0" y2="355.81" stroke="#111" stroke-width="1.1"/></g>
<g><text x="1544" y="419.31" font-size="6.8" font-family="Liberation Sans" font-weight="bold" fill="#111" text-anchor="middle" textLength="26" lengthAdjust="spacingAndGlyphs">COPY  262</text><line x1="1531.0" y1="420.81" x2="1557.0" y2="420.81" stroke="#111" stroke-width="1.1"/></g>
<g><text x="730" y="550.31" font-size="6.8" font-family="Liberation Sans" font-weight="bold" fill="#111" text-anchor="middle" textLength="50" lengthAdjust="spacingAndGlyphs">OPEN OFFICE  244</text><line x1="705.0" y1="551.81" x2="755.0" y2="551.81" stroke="#111" stroke-width="1.1"/></g>
<g><text x="867" y="529.31" font-size="6.8" font-family="Liberation Sans" font-weight="bold" fill="#111" text-anchor="middle" textLength="34" lengthAdjust="spacingAndGlyphs">OFFICE  242</text><line x1="850.0" y1="530.81" x2="884.0" y2="530.81" stroke="#111" stroke-width="1.1"/></g>
<g><text x="867" y="584.01" font-size="6.8" font-family="Liberation Sans" font-weight="bold" fill="#111" text-anchor="middle" textLength="34" lengthAdjust="spacingAndGlyphs">OFFICE  243</text><line x1="850.0" y1="585.51" x2="884.0" y2="585.51" stroke="#111" stroke-width="1.1"/></g>
<g><text x="988" y="536.31" font-size="6.8" font-family="Liberation Sans" font-weight="bold" fill="#111" text-anchor="middle" textLength="34" lengthAdjust="spacingAndGlyphs">OFFICE  240</text><line x1="971.0" y1="537.81" x2="1005.0" y2="537.81" stroke="#111" stroke-width="1.1"/></g>
<g><text x="1038" y="537.31" font-size="6.8" font-family="Liberation Sans" font-weight="bold" fill="#111" text-anchor="middle" textLength="34" lengthAdjust="spacingAndGlyphs">OFFICE  238</text><line x1="1021.0" y1="538.81" x2="1055.0" y2="538.81" stroke="#111" stroke-width="1.1"/></g>
<g><text x="988" y="589.31" font-size="6.8" font-family="Liberation Sans" font-weight="bold" fill="#111" text-anchor="middle" textLength="34" lengthAdjust="spacingAndGlyphs">OFFICE  241</text><line x1="971.0" y1="590.81" x2="1005.0" y2="590.81" stroke="#111" stroke-width="1.1"/></g>
<g><text x="1037" y="589.31" font-size="6.8" font-family="Liberation Sans" font-weight="bold" fill="#111" text-anchor="middle" textLength="34" lengthAdjust="spacingAndGlyphs">OFFICE  239</text><line x1="1020.0" y1="590.81" x2="1054.0" y2="590.81" stroke="#111" stroke-width="1.1"/></g>
<g><text x="1132" y="545.31" font-size="6.8" font-family="Liberation Sans" font-weight="bold" fill="#111" text-anchor="middle" textLength="34" lengthAdjust="spacingAndGlyphs">OFFICE  236</text><line x1="1115.0" y1="546.81" x2="1149.0" y2="546.81" stroke="#111" stroke-width="1.1"/></g>
<g><text x="1180" y="545.31" font-size="6.8" font-family="Liberation Sans" font-weight="bold" fill="#111" text-anchor="middle" textLength="38" lengthAdjust="spacingAndGlyphs">MEETING  234</text><line x1="1161.0" y1="546.81" x2="1199.0" y2="546.81" stroke="#111" stroke-width="1.1"/></g>
<g><text x="1132" y="593.31" font-size="6.8" font-family="Liberation Sans" font-weight="bold" fill="#111" text-anchor="middle" textLength="34" lengthAdjust="spacingAndGlyphs">OFFICE  237</text><line x1="1115.0" y1="594.81" x2="1149.0" y2="594.81" stroke="#111" stroke-width="1.1"/></g>
<g><text x="1180" y="593.31" font-size="6.8" font-family="Liberation Sans" font-weight="bold" fill="#111" text-anchor="middle" textLength="38" lengthAdjust="spacingAndGlyphs">MEETING  235</text><line x1="1161.0" y1="594.81" x2="1199.0" y2="594.81" stroke="#111" stroke-width="1.1"/></g>
<g><text x="1297" y="572.31" font-size="6.8" font-family="Liberation Sans" font-weight="bold" fill="#111" text-anchor="middle" textLength="28" lengthAdjust="spacingAndGlyphs">BREAK  233</text><line x1="1283.0" y1="573.81" x2="1311.0" y2="573.81" stroke="#111" stroke-width="1.1"/></g>
<g><text x="1422" y="544.91" font-size="6.8" font-family="Liberation Sans" font-weight="bold" fill="#111" text-anchor="middle" textLength="38" lengthAdjust="spacingAndGlyphs">MEETING  231</text><line x1="1403.0" y1="546.41" x2="1441.0" y2="546.41" stroke="#111" stroke-width="1.1"/></g>
<g><text x="1465" y="544.91" font-size="6.8" font-family="Liberation Sans" font-weight="bold" fill="#111" text-anchor="middle" textLength="34" lengthAdjust="spacingAndGlyphs">OFFICE  229</text><line x1="1448.0" y1="546.41" x2="1482.0" y2="546.41" stroke="#111" stroke-width="1.1"/></g>
<g><text x="1422" y="587.81" font-size="6.8" font-family="Liberation Sans" font-weight="bold" fill="#111" text-anchor="middle" textLength="38" lengthAdjust="spacingAndGlyphs">MEETING  232</text><line x1="1403.0" y1="589.31" x2="1441.0" y2="589.31" stroke="#111" stroke-width="1.1"/></g>
<g><text x="1467" y="587.81" font-size="6.8" font-family="Liberation Sans" font-weight="bold" fill="#111" text-anchor="middle" textLength="34" lengthAdjust="spacingAndGlyphs">OFFICE  230</text><line x1="1450.0" y1="589.31" x2="1484.0" y2="589.31" stroke="#111" stroke-width="1.1"/></g>
<g><text x="1564" y="528.31" font-size="6.8" font-family="Liberation Sans" font-weight="bold" fill="#111" text-anchor="middle" textLength="34" lengthAdjust="spacingAndGlyphs">OFFICE  227</text><line x1="1547.0" y1="529.81" x2="1581.0" y2="529.81" stroke="#111" stroke-width="1.1"/></g>
<g><text x="1564" y="590.31" font-size="6.8" font-family="Liberation Sans" font-weight="bold" fill="#111" text-anchor="middle" textLength="34" lengthAdjust="spacingAndGlyphs">OFFICE  228</text><line x1="1547.0" y1="591.81" x2="1581.0" y2="591.81" stroke="#111" stroke-width="1.1"/></g>
<g><text x="1602" y="528.31" font-size="6.8" font-family="Liberation Sans" font-weight="bold" fill="#111" text-anchor="middle" textLength="12" lengthAdjust="spacingAndGlyphs">OFFI</text><line x1="1596.0" y1="529.81" x2="1608.0" y2="529.81" stroke="#111" stroke-width="1.1"/></g>
<g><text x="1602" y="590.31" font-size="6.8" font-family="Liberation Sans" font-weight="bold" fill="#111" text-anchor="middle" textLength="14" lengthAdjust="spacingAndGlyphs">OFFIC</text><line x1="1595.0" y1="591.81" x2="1609.0" y2="591.81" stroke="#111" stroke-width="1.1"/></g>
<g transform="rotate(-90 1109.5 430.5)"><text x="1109.5" y="432.37" font-size="5.5" font-family="Liberation Sans" font-weight="bold" fill="#111" text-anchor="middle" textLength="50" lengthAdjust="spacingAndGlyphs">MOTHER'S RM  252</text><line x1="1084.5" y1="433.58" x2="1134.5" y2="433.58" stroke="#111" stroke-width="1.1"/></g>
<g transform="rotate(-90 1491.7 345)"><text x="1491.7" y="346.87" font-size="5.5" font-family="Liberation Sans" font-weight="bold" fill="#111" text-anchor="middle" textLength="40" lengthAdjust="spacingAndGlyphs">STORAGE  260</text><line x1="1471.7" y1="348.08" x2="1511.7" y2="348.08" stroke="#111" stroke-width="1.1"/></g>
<text x="1150" y="218" font-size="6.5" font-family="Liberation Serif" fill="#333" text-anchor="middle" font-weight="bold">23.15 sq m</text>
<rect x="1089.5" y="197" width="18" height="19" fill="none" stroke="#444" stroke-width="0.9"/>
<path d="M1089.5 201 l-5 5.5 l5 5.5" stroke="#444" stroke-width="0.8" fill="none" />
<text x="1098.5" y="208.5" font-size="5" font-family="Liberation Sans" fill="#333" text-anchor="middle">A7.01</text>
<path d="M820.4 160.5 A3.80 3.80 0 0 1 828.0 160.5 A3.80 3.80 0 0 1 835.6 160.5 A3.80 3.80 0 0 1 843.2 160.5 A3.80 3.80 0 0 1 850.8 160.5 A3.80 3.80 0 0 1 858.4 160.5 A3.80 3.80 0 0 1 866.0 160.5 A3.80 3.80 0 0 1 873.6 160.5 A3.80 3.80 0 0 1 881.2 160.5 A3.80 3.80 0 0 1 888.8 160.5 A3.80 3.80 0 0 1 896.4 160.5 A3.80 3.80 0 0 1 904.0 160.5 A3.80 3.80 0 0 1 911.6 160.5 A3.80 3.80 0 0 1 919.2 160.5 A3.62 3.62 0 0 1 919.2 167.8 A3.62 3.62 0 0 1 919.2 175.0 A3.62 3.62 0 0 1 919.2 182.2 A3.62 3.62 0 0 1 919.2 189.5 A3.62 3.62 0 0 1 919.2 196.8 A3.62 3.62 0 0 1 919.2 204.0 A3.62 3.62 0 0 1 919.2 211.2 A3.62 3.62 0 0 1 919.2 218.5 A3.62 3.62 0 0 1 919.2 225.8 A3.62 3.62 0 0 1 919.2 233.0 A3.62 3.62 0 0 1 919.2 240.2 A3.62 3.62 0 0 1 919.2 247.5 A3.62 3.62 0 0 1 919.2 254.8 A3.62 3.62 0 0 1 919.2 262.0 A5.49 5.49 0 0 1 911.0 269.3 A3.78 3.78 0 0 1 903.5 269.8 A3.78 3.78 0 0 1 895.9 270.3 A3.78 3.78 0 0 1 888.4 270.9 A3.78 3.78 0 0 1 880.8 271.4 A3.78 3.78 0 0 1 873.3 271.9 A3.78 3.78 0 0 1 865.7 272.4 A3.78 3.78 0 0 1 858.2 272.9 A3.78 3.78 0 0 1 850.6 273.4 A3.78 3.78 0 0 1 843.1 274.0 A3.78 3.78 0 0 1 835.5 274.5 A3.78 3.78 0 0 1 828.0 275.0 A5.52 5.52 0 0 1 820.4 267.0 A3.80 3.80 0 0 1 820.4 259.4 A3.80 3.80 0 0 1 820.4 251.8 A3.80 3.80 0 0 1 820.4 244.2 A3.80 3.80 0 0 1 820.4 236.6 A3.80 3.80 0 0 1 820.4 229.0 A3.80 3.80 0 0 1 820.4 221.4 A3.80 3.80 0 0 1 820.4 213.8 A3.80 3.80 0 0 1 820.4 206.1 A3.80 3.80 0 0 1 820.4 198.5 A3.80 3.80 0 0 1 820.4 190.9 A3.80 3.80 0 0 1 820.4 183.3 A3.80 3.80 0 0 1 820.4 175.7 A3.80 3.80 0 0 1 820.4 168.1 A3.80 3.80 0 0 1 820.4 160.5 Z" fill="#fbd3a8" style="mix-blend-mode:multiply" stroke="none"/>
<path d="M820.4 160.5 A3.80 3.80 0 0 1 828.0 160.5 A3.80 3.80 0 0 1 835.6 160.5 A3.80 3.80 0 0 1 843.2 160.5 A3.80 3.80 0 0 1 850.8 160.5 A3.80 3.80 0 0 1 858.4 160.5 A3.80 3.80 0 0 1 866.0 160.5 A3.80 3.80 0 0 1 873.6 160.5 A3.80 3.80 0 0 1 881.2 160.5 A3.80 3.80 0 0 1 888.8 160.5 A3.80 3.80 0 0 1 896.4 160.5 A3.80 3.80 0 0 1 904.0 160.5 A3.80 3.80 0 0 1 911.6 160.5 A3.80 3.80 0 0 1 919.2 160.5 A3.62 3.62 0 0 1 919.2 167.8 A3.62 3.62 0 0 1 919.2 175.0 A3.62 3.62 0 0 1 919.2 182.2 A3.62 3.62 0 0 1 919.2 189.5 A3.62 3.62 0 0 1 919.2 196.8 A3.62 3.62 0 0 1 919.2 204.0 A3.62 3.62 0 0 1 919.2 211.2 A3.62 3.62 0 0 1 919.2 218.5 A3.62 3.62 0 0 1 919.2 225.8 A3.62 3.62 0 0 1 919.2 233.0 A3.62 3.62 0 0 1 919.2 240.2 A3.62 3.62 0 0 1 919.2 247.5 A3.62 3.62 0 0 1 919.2 254.8 A3.62 3.62 0 0 1 919.2 262.0 A5.49 5.49 0 0 1 911.0 269.3 A3.78 3.78 0 0 1 903.5 269.8 A3.78 3.78 0 0 1 895.9 270.3 A3.78 3.78 0 0 1 888.4 270.9 A3.78 3.78 0 0 1 880.8 271.4 A3.78 3.78 0 0 1 873.3 271.9 A3.78 3.78 0 0 1 865.7 272.4 A3.78 3.78 0 0 1 858.2 272.9 A3.78 3.78 0 0 1 850.6 273.4 A3.78 3.78 0 0 1 843.1 274.0 A3.78 3.78 0 0 1 835.5 274.5 A3.78 3.78 0 0 1 828.0 275.0 A5.52 5.52 0 0 1 820.4 267.0 A3.80 3.80 0 0 1 820.4 259.4 A3.80 3.80 0 0 1 820.4 251.8 A3.80 3.80 0 0 1 820.4 244.2 A3.80 3.80 0 0 1 820.4 236.6 A3.80 3.80 0 0 1 820.4 229.0 A3.80 3.80 0 0 1 820.4 221.4 A3.80 3.80 0 0 1 820.4 213.8 A3.80 3.80 0 0 1 820.4 206.1 A3.80 3.80 0 0 1 820.4 198.5 A3.80 3.80 0 0 1 820.4 190.9 A3.80 3.80 0 0 1 820.4 183.3 A3.80 3.80 0 0 1 820.4 175.7 A3.80 3.80 0 0 1 820.4 168.1 A3.80 3.80 0 0 1 820.4 160.5 Z" fill="none" stroke="#8484b8" stroke-width="0.9"/>
<path d="M965.3 161 H1062 V212.5 H965.3 Z" fill="#ffffc0" style="mix-blend-mode:multiply" stroke="none"/>
<path d="M965.3 212.5 H1062 V258 L975 264.6 Q965.3 264.6 965.3 255 Z" fill="#b8f5b0" style="mix-blend-mode:multiply" stroke="none"/>
<rect x="1085.4" y="182.8" width="119.4" height="47.9" fill="#f8b48a" style="mix-blend-mode:multiply" stroke="#333" stroke-width="1.3"/>
<line x1="1086" y1="188" x2="1204" y2="188" stroke="#444" stroke-width="0.9" stroke-dasharray="1.5 1.2" />
<line x1="1086" y1="225.5" x2="1204" y2="225.5" stroke="#444" stroke-width="0.9" stroke-dasharray="1.5 1.2" />
<path d="M1300 171 H1374 V250 L1350 252 A49.4 49.4 0 0 0 1300 216 Z" fill="#fde0cc" style="mix-blend-mode:multiply" stroke="none"/>
<path d="M1299.0 171.0 A3.41 3.41 0 0 1 1305.8 171.0 A3.41 3.41 0 0 1 1312.6 171.0 A3.41 3.41 0 0 1 1319.5 171.0 A3.41 3.41 0 0 1 1326.3 171.0 A3.41 3.41 0 0 1 1333.1 171.0 A3.41 3.41 0 0 1 1339.9 171.0 A3.41 3.41 0 0 1 1346.7 171.0 A3.41 3.41 0 0 1 1353.5 171.0 A3.41 3.41 0 0 1 1360.4 171.0 A3.41 3.41 0 0 1 1367.2 171.0 A3.41 3.41 0 0 1 1374.0 171.0 A3.29 3.29 0 0 1 1374.0 177.6 A3.29 3.29 0 0 1 1374.0 184.2 A3.29 3.29 0 0 1 1374.0 190.8 A3.29 3.29 0 0 1 1374.0 197.3 A3.29 3.29 0 0 1 1374.0 203.9 A3.29 3.29 0 0 1 1374.0 210.5 A3.29 3.29 0 0 1 1374.0 217.1 A3.29 3.29 0 0 1 1374.0 223.7 A3.29 3.29 0 0 1 1374.0 230.2 A3.29 3.29 0 0 1 1374.0 236.8 A3.29 3.29 0 0 1 1374.0 243.4 A3.29 3.29 0 0 1 1374.0 250.0 " fill="none" stroke="#ee3344" stroke-width="1"/>
<path d="M1299.0 216.0 A3.21 3.21 0 0 1 1299.0 209.6 A3.21 3.21 0 0 1 1299.0 203.1 A3.21 3.21 0 0 1 1299.0 196.7 A3.21 3.21 0 0 1 1299.0 190.3 A3.21 3.21 0 0 1 1299.0 183.9 A3.21 3.21 0 0 1 1299.0 177.4 A3.21 3.21 0 0 1 1299.0 171.0 " fill="none" stroke="#ee3344" stroke-width="1"/>
<path d="M1300 216 A49.4 49.4 0 0 1 1348 250" stroke="#ee3344" stroke-width="1.3" fill="none" stroke-dasharray="2 1" />
<path d="M1541.5 161 H1608 V212.5 H1541.5 Z" fill="#ffffc0" style="mix-blend-mode:multiply" stroke="none"/>
<line x1="1541.5" y1="213.5" x2="1608" y2="213.5" stroke="#dd2222" stroke-width="1" />
<line x1="966.5" y1="213.5" x2="1061" y2="213.5" stroke="#dd2222" stroke-width="1" />
<path d="M966.5 256 Q966.5 264.5 976 264 L1061 257.6" stroke="#dd2020" stroke-width="1.4" fill="none" />
<path d="M642.5 286.5 A3.80 3.80 0 0 1 650.1 286.0 A3.80 3.80 0 0 1 657.7 285.5 A3.80 3.80 0 0 1 665.3 285.0 A3.80 3.80 0 0 1 672.9 284.5 A3.80 3.80 0 0 1 680.5 284.0 A3.80 3.80 0 0 1 688.0 283.5 A3.80 3.80 0 0 1 695.6 283.0 A3.80 3.80 0 0 1 703.2 282.5 A3.80 3.80 0 0 1 710.8 282.0 A3.80 3.80 0 0 1 718.4 281.5 A3.80 3.80 0 0 1 726.0 281.0 A3.27 3.27 0 0 1 730.8 285.5 A3.27 3.27 0 0 1 735.5 290.0 A3.69 3.69 0 0 1 735.5 297.4 A3.69 3.69 0 0 1 735.5 304.8 A3.69 3.69 0 0 1 735.5 312.2 A3.69 3.69 0 0 1 735.5 319.5 A3.69 3.69 0 0 1 735.5 326.9 A3.69 3.69 0 0 1 735.5 334.3 A3.69 3.69 0 0 1 735.5 341.7 A3.69 3.69 0 0 1 735.5 349.1 A3.69 3.69 0 0 1 735.5 356.5 A3.69 3.69 0 0 1 735.5 363.8 A3.69 3.69 0 0 1 735.5 371.2 A3.69 3.69 0 0 1 735.5 378.6 A3.69 3.69 0 0 1 735.5 386.0 A3.69 3.69 0 0 1 735.5 393.4 A3.69 3.69 0 0 1 735.5 400.8 A3.69 3.69 0 0 1 735.5 408.2 A3.69 3.69 0 0 1 735.5 415.5 A3.69 3.69 0 0 1 735.5 422.9 A3.69 3.69 0 0 1 735.5 430.3 A3.69 3.69 0 0 1 735.5 437.7 A3.69 3.69 0 0 1 735.5 445.1 A3.69 3.69 0 0 1 735.5 452.5 A3.69 3.69 0 0 1 735.5 459.8 A3.69 3.69 0 0 1 735.5 467.2 A3.69 3.69 0 0 1 735.5 474.6 A3.69 3.69 0 0 1 735.5 482.0 A3.10 3.10 0 0 1 730.8 486.0 A3.10 3.10 0 0 1 726.0 490.0 A3.80 3.80 0 0 1 718.4 489.6 A3.80 3.80 0 0 1 710.8 489.3 A3.80 3.80 0 0 1 703.2 488.9 A3.80 3.80 0 0 1 695.6 488.5 A3.80 3.80 0 0 1 688.0 488.2 A3.80 3.80 0 0 1 680.5 487.8 A3.80 3.80 0 0 1 672.9 487.5 A3.80 3.80 0 0 1 665.3 487.1 A3.80 3.80 0 0 1 657.7 486.7 A3.80 3.80 0 0 1 650.1 486.4 A3.80 3.80 0 0 1 642.5 486.0 A3.69 3.69 0 0 1 642.5 478.6 A3.69 3.69 0 0 1 642.5 471.2 A3.69 3.69 0 0 1 642.5 463.8 A3.69 3.69 0 0 1 642.5 456.4 A3.69 3.69 0 0 1 642.5 449.1 A3.69 3.69 0 0 1 642.5 441.7 A3.69 3.69 0 0 1 642.5 434.3 A3.69 3.69 0 0 1 642.5 426.9 A3.69 3.69 0 0 1 642.5 419.5 A3.69 3.69 0 0 1 642.5 412.1 A3.69 3.69 0 0 1 642.5 404.7 A3.69 3.69 0 0 1 642.5 397.3 A3.69 3.69 0 0 1 642.5 389.9 A3.69 3.69 0 0 1 642.5 382.6 A3.69 3.69 0 0 1 642.5 375.2 A3.69 3.69 0 0 1 642.5 367.8 A3.69 3.69 0 0 1 642.5 360.4 A3.69 3.69 0 0 1 642.5 353.0 A3.69 3.69 0 0 1 642.5 345.6 A3.69 3.69 0 0 1 642.5 338.2 A3.69 3.69 0 0 1 642.5 330.8 A3.69 3.69 0 0 1 642.5 323.4 A3.69 3.69 0 0 1 642.5 316.1 A3.69 3.69 0 0 1 642.5 308.7 A3.69 3.69 0 0 1 642.5 301.3 A3.69 3.69 0 0 1 642.5 293.9 A3.69 3.69 0 0 1 642.5 286.5 Z" fill="#d8c6e0" style="mix-blend-mode:multiply" stroke="none"/>
<path d="M642.5 286.5 A3.80 3.80 0 0 1 650.1 286.0 A3.80 3.80 0 0 1 657.7 285.5 A3.80 3.80 0 0 1 665.3 285.0 A3.80 3.80 0 0 1 672.9 284.5 A3.80 3.80 0 0 1 680.5 284.0 A3.80 3.80 0 0 1 688.0 283.5 A3.80 3.80 0 0 1 695.6 283.0 A3.80 3.80 0 0 1 703.2 282.5 A3.80 3.80 0 0 1 710.8 282.0 A3.80 3.80 0 0 1 718.4 281.5 A3.80 3.80 0 0 1 726.0 281.0 A3.27 3.27 0 0 1 730.8 285.5 A3.27 3.27 0 0 1 735.5 290.0 A3.69 3.69 0 0 1 735.5 297.4 A3.69 3.69 0 0 1 735.5 304.8 A3.69 3.69 0 0 1 735.5 312.2 A3.69 3.69 0 0 1 735.5 319.5 A3.69 3.69 0 0 1 735.5 326.9 A3.69 3.69 0 0 1 735.5 334.3 A3.69 3.69 0 0 1 735.5 341.7 A3.69 3.69 0 0 1 735.5 349.1 A3.69 3.69 0 0 1 735.5 356.5 A3.69 3.69 0 0 1 735.5 363.8 A3.69 3.69 0 0 1 735.5 371.2 A3.69 3.69 0 0 1 735.5 378.6 A3.69 3.69 0 0 1 735.5 386.0 A3.69 3.69 0 0 1 735.5 393.4 A3.69 3.69 0 0 1 735.5 400.8 A3.69 3.69 0 0 1 735.5 408.2 A3.69 3.69 0 0 1 735.5 415.5 A3.69 3.69 0 0 1 735.5 422.9 A3.69 3.69 0 0 1 735.5 430.3 A3.69 3.69 0 0 1 735.5 437.7 A3.69 3.69 0 0 1 735.5 445.1 A3.69 3.69 0 0 1 735.5 452.5 A3.69 3.69 0 0 1 735.5 459.8 A3.69 3.69 0 0 1 735.5 467.2 A3.69 3.69 0 0 1 735.5 474.6 A3.69 3.69 0 0 1 735.5 482.0 A3.10 3.10 0 0 1 730.8 486.0 A3.10 3.10 0 0 1 726.0 490.0 A3.80 3.80 0 0 1 718.4 489.6 A3.80 3.80 0 0 1 710.8 489.3 A3.80 3.80 0 0 1 703.2 488.9 A3.80 3.80 0 0 1 695.6 488.5 A3.80 3.80 0 0 1 688.0 488.2 A3.80 3.80 0 0 1 680.5 487.8 A3.80 3.80 0 0 1 672.9 487.5 A3.80 3.80 0 0 1 665.3 487.1 A3.80 3.80 0 0 1 657.7 486.7 A3.80 3.80 0 0 1 650.1 486.4 A3.80 3.80 0 0 1 642.5 486.0 A3.69 3.69 0 0 1 642.5 478.6 A3.69 3.69 0 0 1 642.5 471.2 A3.69 3.69 0 0 1 642.5 463.8 A3.69 3.69 0 0 1 642.5 456.4 A3.69 3.69 0 0 1 642.5 449.1 A3.69 3.69 0 0 1 642.5 441.7 A3.69 3.69 0 0 1 642.5 434.3 A3.69 3.69 0 0 1 642.5 426.9 A3.69 3.69 0 0 1 642.5 419.5 A3.69 3.69 0 0 1 642.5 412.1 A3.69 3.69 0 0 1 642.5 404.7 A3.69 3.69 0 0 1 642.5 397.3 A3.69 3.69 0 0 1 642.5 389.9 A3.69 3.69 0 0 1 642.5 382.6 A3.69 3.69 0 0 1 642.5 375.2 A3.69 3.69 0 0 1 642.5 367.8 A3.69 3.69 0 0 1 642.5 360.4 A3.69 3.69 0 0 1 642.5 353.0 A3.69 3.69 0 0 1 642.5 345.6 A3.69 3.69 0 0 1 642.5 338.2 A3.69 3.69 0 0 1 642.5 330.8 A3.69 3.69 0 0 1 642.5 323.4 A3.69 3.69 0 0 1 642.5 316.1 A3.69 3.69 0 0 1 642.5 308.7 A3.69 3.69 0 0 1 642.5 301.3 A3.69 3.69 0 0 1 642.5 293.9 A3.69 3.69 0 0 1 642.5 286.5 Z" fill="none" stroke="#7a7ab8" stroke-width="0.9"/>
<rect x="775.2" y="321.5" width="305" height="130.5" rx="6" fill="#b0c4dc" style="mix-blend-mode:multiply" stroke="#e02040" stroke-width="1.3"/>
<rect x="1236" y="321.4" width="36" height="89" fill="#c8e4a6" style="mix-blend-mode:multiply"/>
<path d="M1236.0 321.0 A3.00 3.00 0 0 1 1242.0 321.0 A3.00 3.00 0 0 1 1248.0 321.0 A3.00 3.00 0 0 1 1254.0 321.0 A3.00 3.00 0 0 1 1260.0 321.0 A3.00 3.00 0 0 1 1266.0 321.0 A3.00 3.00 0 0 1 1272.0 321.0 A2.97 2.97 0 0 1 1272.0 326.9 A2.97 2.97 0 0 1 1272.0 332.9 A2.97 2.97 0 0 1 1272.0 338.8 A2.97 2.97 0 0 1 1272.0 344.7 A2.97 2.97 0 0 1 1272.0 350.7 A2.97 2.97 0 0 1 1272.0 356.6 A2.97 2.97 0 0 1 1272.0 362.5 A2.97 2.97 0 0 1 1272.0 368.5 A2.97 2.97 0 0 1 1272.0 374.4 A2.97 2.97 0 0 1 1272.0 380.3 A2.97 2.97 0 0 1 1272.0 386.3 A2.97 2.97 0 0 1 1272.0 392.2 A2.97 2.97 0 0 1 1272.0 398.1 A2.97 2.97 0 0 1 1272.0 404.1 A2.97 2.97 0 0 1 1272.0 410.0 A3.00 3.00 0 0 1 1266.0 410.0 A3.00 3.00 0 0 1 1260.0 410.0 A3.00 3.00 0 0 1 1254.0 410.0 A3.00 3.00 0 0 1 1248.0 410.0 A3.00 3.00 0 0 1 1242.0 410.0 A3.00 3.00 0 0 1 1236.0 410.0 A2.97 2.97 0 0 1 1236.0 404.1 A2.97 2.97 0 0 1 1236.0 398.1 A2.97 2.97 0 0 1 1236.0 392.2 A2.97 2.97 0 0 1 1236.0 386.3 A2.97 2.97 0 0 1 1236.0 380.3 A2.97 2.97 0 0 1 1236.0 374.4 A2.97 2.97 0 0 1 1236.0 368.5 A2.97 2.97 0 0 1 1236.0 362.5 A2.97 2.97 0 0 1 1236.0 356.6 A2.97 2.97 0 0 1 1236.0 350.7 A2.97 2.97 0 0 1 1236.0 344.7 A2.97 2.97 0 0 1 1236.0 338.8 A2.97 2.97 0 0 1 1236.0 332.9 A2.97 2.97 0 0 1 1236.0 326.9 A2.97 2.97 0 0 1 1236.0 321.0 Z" fill="none" stroke="#ee2233" stroke-width="0.9"/>
<rect x="1331" y="325.5" width="29.6" height="37.5" fill="#f8f090" style="mix-blend-mode:multiply" stroke="#dd2222" stroke-width="1.1"/>
<rect x="1372.7" y="324.5" width="88" height="60.6" fill="#f5b8c0" style="mix-blend-mode:multiply"/>
<path d="M1372.7 324.5 A3.38 3.38 0 0 1 1379.5 324.5 A3.38 3.38 0 0 1 1386.2 324.5 A3.38 3.38 0 0 1 1393.0 324.5 A3.38 3.38 0 0 1 1399.8 324.5 A3.38 3.38 0 0 1 1406.5 324.5 A3.38 3.38 0 0 1 1413.3 324.5 A3.38 3.38 0 0 1 1420.1 324.5 A3.38 3.38 0 0 1 1426.9 324.5 A3.38 3.38 0 0 1 1433.6 324.5 A3.38 3.38 0 0 1 1440.4 324.5 A3.38 3.38 0 0 1 1447.2 324.5 A3.38 3.38 0 0 1 1453.9 324.5 A3.38 3.38 0 0 1 1460.7 324.5 A3.37 3.37 0 0 1 1460.7 331.2 A3.37 3.37 0 0 1 1460.7 338.0 A3.37 3.37 0 0 1 1460.7 344.7 A3.37 3.37 0 0 1 1460.7 351.4 A3.37 3.37 0 0 1 1460.7 358.2 A3.37 3.37 0 0 1 1460.7 364.9 A3.37 3.37 0 0 1 1460.7 371.6 A3.37 3.37 0 0 1 1460.7 378.4 A3.37 3.37 0 0 1 1460.7 385.1 A3.38 3.38 0 0 1 1453.9 385.1 A3.38 3.38 0 0 1 1447.2 385.1 A3.38 3.38 0 0 1 1440.4 385.1 A3.38 3.38 0 0 1 1433.6 385.1 A3.38 3.38 0 0 1 1426.9 385.1 A3.38 3.38 0 0 1 1420.1 385.1 A3.38 3.38 0 0 1 1413.3 385.1 A3.38 3.38 0 0 1 1406.5 385.1 A3.38 3.38 0 0 1 1399.8 385.1 A3.38 3.38 0 0 1 1393.0 385.1 A3.38 3.38 0 0 1 1386.2 385.1 A3.38 3.38 0 0 1 1379.5 385.1 A3.38 3.38 0 0 1 1372.7 385.1 A3.37 3.37 0 0 1 1372.7 378.4 A3.37 3.37 0 0 1 1372.7 371.6 A3.37 3.37 0 0 1 1372.7 364.9 A3.37 3.37 0 0 1 1372.7 358.2 A3.37 3.37 0 0 1 1372.7 351.4 A3.37 3.37 0 0 1 1372.7 344.7 A3.37 3.37 0 0 1 1372.7 338.0 A3.37 3.37 0 0 1 1372.7 331.2 A3.37 3.37 0 0 1 1372.7 324.5 Z" fill="none" stroke="#ee3344" stroke-width="0.9"/>
<line x1="1376" y1="132" x2="1512" y2="132" stroke="#ee3344" stroke-width="1.7" />
<path d="M1372.6 132 l7 -3 v6 z M1516.3 132 l-7 -3 v6 z" stroke="#ee3344" stroke-width="0.5" fill="#ee3344" />
<text x="1444" y="134.5" font-size="7" font-family="Liberation Sans" fill="#ee3344" fill-opacity="0.6" text-anchor="middle">30' 0"</text>
<text x="1301" y="237.5" font-size="10" font-family="Liberation Serif" font-weight="bold" fill="#e02030" text-anchor="middle">Room 001</text>
<line x1="1310" y1="218" x2="1310" y2="228" stroke="#e02030" stroke-width="0.9" />
<text x="1012.7" y="199.8" font-size="6.5" font-family="Liberation Sans" fill="#e83030" text-anchor="middle">204.62 sf</text>
<text x="1012" y="248.3" font-size="6.5" font-family="Liberation Sans" fill="#b05a28" text-anchor="middle">193.61 sf</text>
<text x="1588" y="179" font-size="7" font-family="Liberation Sans" fill="#e83030" text-anchor="middle">204.51 sf</text>
<text x="974.5" y="392.5" font-size="10" font-family="Liberation Sans" font-weight="bold" fill="#e02040" text-anchor="middle" textLength="46" lengthAdjust="spacingAndGlyphs">160.89 sq m</text>
<rect x="1279" y="362" width="41" height="9" fill="#d6f0c8"/>
<line x1="1272" y1="366" x2="1280" y2="366" stroke="#e02030" stroke-width="0.9" />
<text x="1299.5" y="368" font-size="4.8" font-family="Liberation Sans" fill="#e02030" text-anchor="middle" font-weight="bold">Split into three</text>
<text x="1423" y="355" font-size="3.5" font-family="Liberation Sans" fill="#cc1020">Merged Furniture</text>
<line x1="1446" y1="354" x2="1462" y2="354" stroke="#cc1020" stroke-width="0.7" />
<rect x="574.6" y="863" width="163.7" height="88.5" fill="#fdfeff" stroke="#556" stroke-width="1.1"/>
<rect x="578" y="866.5" width="157" height="81.5" fill="none" stroke="#556" stroke-width="1.1"/>
<text x="0" y="0" transform="translate(601.0 898.8) scale(0.74 1)" font-size="19.5" font-family="Liberation Sans" font-weight="bold" fill="#3d4e62" stroke="#3d4e62" stroke-width="0.5" text-anchor="middle">B</text>
<text x="0" y="0" transform="translate(617.5 898.8) scale(0.74 1)" font-size="19.5" font-family="Liberation Sans" font-weight="bold" fill="#3d4e62" stroke="#3d4e62" stroke-width="0.5" text-anchor="middle">R</text>
<text x="0" y="0" transform="translate(634.0 898.8) scale(0.74 1)" font-size="19.5" font-family="Liberation Sans" font-weight="bold" fill="#3d4e62" stroke="#3d4e62" stroke-width="0.5" text-anchor="middle">I</text>
<text x="0" y="0" transform="translate(650.5 898.8) scale(0.74 1)" font-size="19.5" font-family="Liberation Sans" font-weight="bold" fill="#3d4e62" stroke="#3d4e62" stroke-width="0.5" text-anchor="middle">G</text>
<text x="0" y="0" transform="translate(667.0 898.8) scale(0.74 1)" font-size="19.5" font-family="Liberation Sans" font-weight="bold" fill="#3d4e62" stroke="#3d4e62" stroke-width="0.5" text-anchor="middle">H</text>
<text x="0" y="0" transform="translate(683.5 898.8) scale(0.74 1)" font-size="19.5" font-family="Liberation Sans" font-weight="bold" fill="#3d4e62" stroke="#3d4e62" stroke-width="0.5" text-anchor="middle">T</text>
<text x="0" y="0" transform="translate(700.0 898.8) scale(0.74 1)" font-size="19.5" font-family="Liberation Sans" font-weight="bold" fill="#3d4e62" stroke="#3d4e62" stroke-width="0.5" text-anchor="middle">E</text>
<text x="0" y="0" transform="translate(716.5 898.8) scale(0.74 1)" font-size="19.5" font-family="Liberation Sans" font-weight="bold" fill="#3d4e62" stroke="#3d4e62" stroke-width="0.5" text-anchor="middle">R</text>
<text x="0" y="0" transform="translate(601.0 917.8) scale(0.74 1)" font-size="19.5" font-family="Liberation Sans" font-weight="bold" fill="#3d4e62" stroke="#3d4e62" stroke-width="0.5" text-anchor="middle">G</text>
<text x="0" y="0" transform="translate(617.5 917.8) scale(0.74 1)" font-size="19.5" font-family="Liberation Sans" font-weight="bold" fill="#3d4e62" stroke="#3d4e62" stroke-width="0.5" text-anchor="middle">R</text>
<text x="0" y="0" transform="translate(634.0 917.8) scale(0.74 1)" font-size="19.5" font-family="Liberation Sans" font-weight="bold" fill="#3d4e62" stroke="#3d4e62" stroke-width="0.5" text-anchor="middle">A</text>
<text x="0" y="0" transform="translate(650.5 917.8) scale(0.74 1)" font-size="19.5" font-family="Liberation Sans" font-weight="bold" fill="#3d4e62" stroke="#3d4e62" stroke-width="0.5" text-anchor="middle">P</text>
<text x="0" y="0" transform="translate(667.0 917.8) scale(0.74 1)" font-size="19.5" font-family="Liberation Sans" font-weight="bold" fill="#3d4e62" stroke="#3d4e62" stroke-width="0.5" text-anchor="middle">H</text>
<text x="0" y="0" transform="translate(683.5 917.8) scale(0.74 1)" font-size="19.5" font-family="Liberation Sans" font-weight="bold" fill="#3d4e62" stroke="#3d4e62" stroke-width="0.5" text-anchor="middle">I</text>
<text x="0" y="0" transform="translate(700.0 917.8) scale(0.74 1)" font-size="19.5" font-family="Liberation Sans" font-weight="bold" fill="#3d4e62" stroke="#3d4e62" stroke-width="0.5" text-anchor="middle">C</text>
<text x="0" y="0" transform="translate(716.5 917.8) scale(0.74 1)" font-size="19.5" font-family="Liberation Sans" font-weight="bold" fill="#3d4e62" stroke="#3d4e62" stroke-width="0.5" text-anchor="middle">S</text>
<text x="656.5" y="930" font-size="4.5" font-family="Liberation Sans" font-weight="bold" fill="#3d4e62" text-anchor="middle" textLength="98" lengthAdjust="spacing">DIGITISING CONSTRUCTION SINCE 2003</text>
<rect x="739" y="880" width="50" height="47" fill="#e6fbff"/><rect x="789" y="888" width="157" height="33" fill="#e6fbff"/>
<path d="M746.7 884 H753.5 V916 H778.5 V891 H760 V884 H785 V922.7 H746.7 Z" fill="#4455d8"/>
<rect x="760" y="897.5" width="12.8" height="12.3" fill="#4455d8"/>
<circle cx="941" cy="892" r="0.9" fill="#4455d8"/>
<text x="794.5" y="915.3" font-size="33" font-family="Liberation Sans" font-weight="bold" fill="#4455d8" textLength="145" lengthAdjust="spacingAndGlyphs">BLUEBEAM</text>
<text x="794.5" y="931" font-size="10" font-family="Liberation Sans" font-weight="bold" fill="#222" textLength="77" lengthAdjust="spacingAndGlyphs">Platinum Partner</text>
<text x="961" y="870" font-size="10" font-family="Liberation Sans" font-weight="bold" fill="#111" textLength="89.5" lengthAdjust="spacingAndGlyphs">Capture Engineers</text>
<text x="961" y="881.5" font-size="10" font-family="Liberation Sans" fill="#111">Mechanical</text>
<text x="961" y="893" font-size="10" font-family="Liberation Sans" fill="#111">Electrical</text>
<text x="961" y="904.5" font-size="10" font-family="Liberation Sans" fill="#111">Plumbing</text>
<text x="961" y="926.5" font-size="10" font-family="Liberation Sans" fill="#111">1234 Miller St.</text>
<text x="961" y="938" font-size="10" font-family="Liberation Sans" fill="#111" textLength="103" lengthAdjust="spacingAndGlyphs">Manchester, NH 06930</text>
<text x="1088" y="870" font-size="10" font-family="Liberation Sans" font-weight="bold" fill="#111" textLength="95" lengthAdjust="spacingAndGlyphs">REVU ARCHITECTS</text>
<text x="1088" y="893" font-size="10" font-family="Liberation Sans" fill="#111">5555 N. Broad St</text>
<text x="1088" y="904.5" font-size="10" font-family="Liberation Sans" fill="#111">Pasadena CA 91101</text>
<text x="1207" y="870" font-size="10" font-family="Liberation Sans" font-weight="bold" fill="#111" textLength="88" lengthAdjust="spacingAndGlyphs">OFFICE BUILDING</text>
<text x="1207" y="893" font-size="10" font-family="Liberation Sans" fill="#111">Project No: 323232</text>
<text x="1207" y="915" font-size="10" font-family="Liberation Sans" fill="#111">Project Address:</text>
<text x="1207" y="926.5" font-size="10" font-family="Liberation Sans" fill="#111">123 Schonsett St</text>
<text x="1207" y="938" font-size="10" font-family="Liberation Sans" fill="#111">Chicago, IL 60601</text>
<text x="1328" y="870" font-size="4.5" font-family="Liberation Sans" font-weight="bold" fill="#222">LEGAL DISCLAIMER:</text>
<text x="1328" y="882.00" font-size="4.6" font-family="Liberation Sans" fill="#333">ALL IDEAS, DESIGNS, AND PLANS INDICATED</text>
<text x="1328" y="887.75" font-size="4.6" font-family="Liberation Sans" fill="#333">OR REPRESENTED BY THESE DRAWINGS</text>
<text x="1328" y="893.50" font-size="4.6" font-family="Liberation Sans" fill="#333">ARE OWNED AND ARE THE PROPERTY OF</text>
<text x="1328" y="899.25" font-size="4.6" font-family="Liberation Sans" fill="#333">BLUEBEAM, INC. AND WERE CREATED AND</text>
<text x="1328" y="905.00" font-size="4.6" font-family="Liberation Sans" fill="#333">DEVELOPED FOR DEMONSTRATION</text>
<text x="1328" y="910.75" font-size="4.6" font-family="Liberation Sans" fill="#333">PURPOSES ONLY. NONE OF SUCH IDEAS,</text>
<text x="1328" y="916.50" font-size="4.6" font-family="Liberation Sans" fill="#333">DESIGNS, OR PLANS SHALL BE USED FOR</text>
<text x="1328" y="922.25" font-size="4.6" font-family="Liberation Sans" fill="#333">ANY PURPOSE WHATSOEVER EXCEPT AS A</text>
<text x="1328" y="928.00" font-size="4.6" font-family="Liberation Sans" fill="#333">DEMONSTRATION SET WITHOUT THE</text>
<text x="1328" y="933.75" font-size="4.6" font-family="Liberation Sans" fill="#333">EXPRESSED WRITTEN CONCENT OF</text>
<text x="1328" y="939.50" font-size="4.6" font-family="Liberation Sans" fill="#333">BLUEBEAM, INC</text>
<text x="1459" y="865" font-size="4.2" font-family="Liberation Sans" fill="#444">DATE</text><text x="1554" y="865" font-size="4.2" font-family="Liberation Sans" fill="#444" text-anchor="end">03/04/2018</text>
<line x1="1458" y1="866" x2="1554" y2="866" stroke="#555" stroke-width="0.7" />
<text x="1459" y="871.5" font-size="4.2" font-family="Liberation Sans" fill="#444">ISSUED FOR:</text><text x="1554" y="871.5" font-size="4.2" font-family="Liberation Sans" fill="#444" text-anchor="end">INTERNAL REVIEW</text>
<line x1="1458" y1="872.5" x2="1554" y2="872.5" stroke="#555" stroke-width="0.7" />
<text x="1459" y="884" font-size="4.2" font-family="Liberation Sans" fill="#444">PROJECT</text><text x="1554" y="884" font-size="4.2" font-family="Liberation Sans" fill="#444" text-anchor="end">3232</text>
<line x1="1458" y1="885" x2="1554" y2="885" stroke="#555" stroke-width="0.7" />
<text x="1459" y="890.5" font-size="4.2" font-family="Liberation Sans" fill="#444">DRAWN BY:</text><text x="1554" y="890.5" font-size="4.2" font-family="Liberation Sans" fill="#444" text-anchor="end">Author</text>
<line x1="1458" y1="891.5" x2="1554" y2="891.5" stroke="#555" stroke-width="0.7" />
<text x="1459" y="897" font-size="4.2" font-family="Liberation Sans" fill="#444">CHECKED BY:</text><text x="1554" y="897" font-size="4.2" font-family="Liberation Sans" fill="#444" text-anchor="end">Checker</text>
<line x1="1458" y1="898" x2="1554" y2="898" stroke="#555" stroke-width="0.7" />
<text x="1459" y="903.5" font-size="4.2" font-family="Liberation Sans" fill="#444">APPROVED BY:</text><text x="1554" y="903.5" font-size="4.2" font-family="Liberation Sans" fill="#444" text-anchor="end">Approver</text>
<line x1="1458" y1="904.5" x2="1554" y2="904.5" stroke="#555" stroke-width="0.7" />
<line x1="1458" y1="873" x2="1554" y2="873" stroke="#333" stroke-width="1.1" />
<line x1="1458" y1="880" x2="1554" y2="880" stroke="#333" stroke-width="1.1" />
<rect x="1458" y="905" width="96" height="6" fill="none" stroke="#333" stroke-width="0.9"/>
<path d="M1481 905 v6 M1505 905 v6" stroke="#333" stroke-width="0.7" fill="none" />
<text x="1604" y="898.5" font-size="12" font-family="Liberation Sans" font-weight="bold" fill="#111" text-anchor="end">N</text>
<text x="1577" y="913.5" font-size="12" font-family="Liberation Sans" font-weight="bold" fill="#111">CONS</text>

</g>
<clipPath id="mb"><rect x="1270" y="0" width="50" height="23"/></clipPath>
<g clip-path="url(#mb)"><ellipse cx="1291.5" cy="11" rx="12.8" ry="12.5" fill="#f4f4f4"/>
<path d="M1290 -1 Q1281.5 8 1282 24 M1284.5 15 Q1297 13.5 1300.5 8.5 Q1302.5 2.5 1296 0.5 Q1292 -0.5 1290 -1 M1284.5 15 L1294.5 24" fill="none" stroke="#000" stroke-width="2.3"/>
<path d="M1277 0 Q1274 12 1281.5 24 L1270 24 L1270 0 Z" fill="#000"/></g>
<line x1="1534" y1="11" x2="1553" y2="11" stroke="#f0f0f0" stroke-width="2"/>
<rect x="1587" y="7.5" width="12" height="12" fill="none" stroke="#f0f0f0" stroke-width="1.6"/>
<path d="M1591 7.5 v-4 h13 v13 h-4" fill="none" stroke="#f0f0f0" stroke-width="1.6"/>
<path d="M1640 3.5 l17 17 M1657 3.5 l-17 17" stroke="#f0f0f0" stroke-width="1.8"/>
<rect x="8.5" y="30.5" width="50" height="28" rx="4" fill="none" stroke="#5a5a5a" stroke-width="1.2"/>
<path d="M15 36 h9 l6 6 v14 h-15 z M24 36 v6 h6" fill="none" stroke="#f0f0f0" stroke-width="1.3"/>
<rect x="19.5" y="47.5" width="6" height="6" fill="none" stroke="#f0f0f0" stroke-width="1.1"/><rect x="21.5" y="49.5" width="2" height="2" fill="#f0f0f0"/>
<path d="M42 41 l5 5 l5 -5" fill="none" stroke="#f0f0f0" stroke-width="1.5"/>
<rect x="382.5" y="30.5" width="29" height="28" rx="4" fill="none" stroke="#5a5a5a" stroke-width="1.2"/>
<path d="M389 36 h10 l5 5 v14 h-15 z M399 36 v5 h5" fill="none" stroke="#f0f0f0" stroke-width="1.3"/>
<path d="M404 51 v6 M401 54 h6" stroke="#e8c020" stroke-width="1.4"/>
<rect x="9" y="80.5" width="22" height="10.5" fill="none" stroke="#f0f0f0" stroke-width="1.5"/>
<path d="M13 80.5 v5 M17 80.5 v5 M21 80.5 v5 M25 80.5 v5 M29 80.5 v3" stroke="#f0f0f0" stroke-width="1.3"/>
<rect x="12.5" y="116" width="16" height="20.5" fill="none" stroke="#f0f0f0" stroke-width="1.5"/><path d="M12.5 126 h16 M18 120 q2.5 2 5 0 M18 130 q2.5 2 5 0" fill="none" stroke="#f0f0f0" stroke-width="1.3"/>
<rect x="10.5" y="157" width="8" height="8" fill="none" stroke="#f0f0f0" stroke-width="1.5"/>
<rect x="22" y="157" width="8" height="8" fill="none" stroke="#f0f0f0" stroke-width="1.5"/>
<rect x="10.5" y="168" width="8" height="8" fill="none" stroke="#f0f0f0" stroke-width="1.5"/>
<rect x="22" y="168" width="8" height="8" fill="none" stroke="#f0f0f0" stroke-width="1.5"/>
<rect x="12.5" y="197.5" width="16" height="20" fill="none" stroke="#f0f0f0" stroke-width="1.5"/><path d="M15 197.5 v10 l2.5 -2 l2.5 2 v-10" fill="none" stroke="#f0f0f0" stroke-width="1.3"/>
<path d="M10.5 237 h8 v6 M22.5 237 h8 v20.5 h-8 M10.5 237 v20.5 h8 v-5 h-4 M10.5 247 h5 M22 247 h4 M19 247 v3" fill="none" stroke="#f0f0f0" stroke-width="1.6"/>
<rect x="11.5" y="282" width="19" height="13" rx="1.5" fill="none" stroke="#fff" stroke-width="1.4"/><path d="M17 282 v-3 h8 v3 M11.5 287.5 h19 M16 286.5 v2 M26 286.5 v2" fill="none" stroke="#fff" stroke-width="1.3"/>
<polygon points="30.50,327.00 30.30,329.05 27.57,330.13 26.81,331.55 27.42,334.42 25.83,335.73 23.13,334.57 21.60,335.03 20.00,337.50 17.95,337.30 16.87,334.57 15.45,333.81 12.58,334.42 11.27,332.83 12.43,330.13 11.97,328.60 9.50,327.00 9.70,324.95 12.43,323.87 13.19,322.45 12.58,319.58 14.17,318.27 16.87,319.43 18.40,318.97 20.00,316.50 22.05,316.70 23.13,319.43 24.55,320.19 27.42,319.58 28.73,321.17 27.57,323.87 28.03,325.40" fill="none" stroke="#f0f0f0" stroke-width="1.4" stroke-linejoin="round"/><circle cx="20" cy="327" r="4.73" fill="none" stroke="#f0f0f0" stroke-width="1.4"/>
<path d="M27 358.5 h-16 v20 h16 v-5" fill="none" stroke="#f0f0f0" stroke-width="1.5"/><path d="M14 363 h9 M14 367 h8 M14 371 h5 M14 375 h4" stroke="#f0f0f0" stroke-width="1.3"/><path d="M20 375 l9 -11 l2.5 2 l-9 11 h-2.5 z" fill="none" stroke="#f0f0f0" stroke-width="1.3"/>
<path d="M10 418.5 h20 M13 414 l3 -9 l6 -4 l5 5 l-4 6 l-9 3 z M18 408 l3 3" fill="none" stroke="#f0f0f0" stroke-width="1.4"/>
<path d="M30 441 h-15 l-6 7 l6 7 h15 z" fill="none" stroke="#f0f0f0" stroke-width="1.5"/>
<path d="M11 491 v-11 h18 v11 M14 491 l2 -8 h8 l2 8 M10 491 h20 M10 494 h20 M10 497 h20" fill="none" stroke="#f0f0f0" stroke-width="1.4"/>
<circle cx="18" cy="526" r="6.5" fill="none" stroke="#f0f0f0" stroke-width="1.6"/><path d="M23 531 l6 6" stroke="#f0f0f0" stroke-width="1.8"/>
<path d="M10 565 l8 -6 l12 3 v13 l-6 5 h-14 z M13 580 v-6 h4 v6" fill="none" stroke="#f0f0f0" stroke-width="1.5"/>
<path d="M20 601 l10 6 l-10 6 l-10 -6 z M10 612 l10 6 l10 -6" fill="none" stroke="#f0f0f0" stroke-width="1.5"/>
<rect x="10" y="991.8" width="2.5" height="2.5" fill="#e8f4ff"/><rect x="15" y="991.8" width="14" height="2.5" fill="#e8f4ff"/>
<rect x="10" y="997.8" width="2.5" height="2.5" fill="#e8f4ff"/><rect x="15" y="997.8" width="14" height="2.5" fill="#e8f4ff"/>
<rect x="10" y="1003.8" width="2.5" height="2.5" fill="#e8f4ff"/><rect x="15" y="1003.8" width="14" height="2.5" fill="#e8f4ff"/>
<path d="M55 999.5 l-7 12.5 h14 z" fill="none" stroke="#fff" stroke-width="1.8"/>
<rect x="85" y="1004.5" width="388" height="3" fill="#454545"/>
<circle cx="78" cy="1006" r="7" fill="#9a9a9a"/>
<path d="M493.5 996 l-11 20.5 h22 z" fill="none" stroke="#fff" stroke-width="1.8"/>
<polygon points="482.00,123.50 481.80,125.55 479.07,126.63 478.31,128.05 478.92,130.92 477.33,132.23 474.63,131.07 473.10,131.53 471.50,134.00 469.45,133.80 468.37,131.07 466.95,130.31 464.08,130.92 462.77,129.33 463.93,126.63 463.47,125.10 461.00,123.50 461.20,121.45 463.93,120.37 464.69,118.95 464.08,116.08 465.67,114.77 468.37,115.93 469.90,115.47 471.50,113.00 473.55,113.20 474.63,115.93 476.05,116.69 478.92,116.08 480.23,117.67 479.07,120.37 479.53,121.90" fill="none" stroke="#f0f0f0" stroke-width="1.4" stroke-linejoin="round"/><circle cx="471.5" cy="123.5" r="4.73" fill="none" stroke="#f0f0f0" stroke-width="1.4"/>
<polygon points="482.00,213.80 481.80,215.85 479.07,216.93 478.31,218.35 478.92,221.22 477.33,222.53 474.63,221.37 473.10,221.83 471.50,224.30 469.45,224.10 468.37,221.37 466.95,220.61 464.08,221.22 462.77,219.63 463.93,216.93 463.47,215.40 461.00,213.80 461.20,211.75 463.93,210.67 464.69,209.25 464.08,206.38 465.67,205.07 468.37,206.23 469.90,205.77 471.50,203.30 473.55,203.50 474.63,206.23 476.05,206.99 478.92,206.38 480.23,207.97 479.07,210.67 479.53,212.20" fill="none" stroke="#f0f0f0" stroke-width="1.4" stroke-linejoin="round"/><circle cx="471.5" cy="213.8" r="4.73" fill="none" stroke="#f0f0f0" stroke-width="1.4"/>
<polygon points="482.00,254.00 481.80,256.05 479.07,257.13 478.31,258.55 478.92,261.42 477.33,262.73 474.63,261.57 473.10,262.03 471.50,264.50 469.45,264.30 468.37,261.57 466.95,260.81 464.08,261.42 462.77,259.83 463.93,257.13 463.47,255.60 461.00,254.00 461.20,251.95 463.93,250.87 464.69,249.45 464.08,246.58 465.67,245.27 468.37,246.43 469.90,245.97 471.50,243.50 473.55,243.70 474.63,246.43 476.05,247.19 478.92,246.58 480.23,248.17 479.07,250.87 479.53,252.40" fill="none" stroke="#f0f0f0" stroke-width="1.4" stroke-linejoin="round"/><circle cx="471.5" cy="254" r="4.73" fill="none" stroke="#f0f0f0" stroke-width="1.4"/>
<polygon points="482.00,294.40 481.80,296.45 479.07,297.53 478.31,298.95 478.92,301.82 477.33,303.13 474.63,301.97 473.10,302.43 471.50,304.90 469.45,304.70 468.37,301.97 466.95,301.21 464.08,301.82 462.77,300.23 463.93,297.53 463.47,296.00 461.00,294.40 461.20,292.35 463.93,291.27 464.69,289.85 464.08,286.98 465.67,285.67 468.37,286.83 469.90,286.37 471.50,283.90 473.55,284.10 474.63,286.83 476.05,287.59 478.92,286.98 480.23,288.57 479.07,291.27 479.53,292.80" fill="none" stroke="#f0f0f0" stroke-width="1.4" stroke-linejoin="round"/><circle cx="471.5" cy="294.4" r="4.73" fill="none" stroke="#f0f0f0" stroke-width="1.4"/>
<polygon points="482.00,334.50 481.80,336.55 479.07,337.63 478.31,339.05 478.92,341.92 477.33,343.23 474.63,342.07 473.10,342.53 471.50,345.00 469.45,344.80 468.37,342.07 466.95,341.31 464.08,341.92 462.77,340.33 463.93,337.63 463.47,336.10 461.00,334.50 461.20,332.45 463.93,331.37 464.69,329.95 464.08,327.08 465.67,325.77 468.37,326.93 469.90,326.47 471.50,324.00 473.55,324.20 474.63,326.93 476.05,327.69 478.92,327.08 480.23,328.67 479.07,331.37 479.53,332.90" fill="none" stroke="#f0f0f0" stroke-width="1.4" stroke-linejoin="round"/><circle cx="471.5" cy="334.5" r="4.73" fill="none" stroke="#f0f0f0" stroke-width="1.4"/>
<path d="M54 122 l4.8 4.8 l4.8 -4.8" fill="none" stroke="#f0f0f0" stroke-width="1.9"/>
<path d="M54 332.5 l4.8 4.8 l4.8 -4.8" fill="none" stroke="#f0f0f0" stroke-width="1.9"/>
<path d="M56.5 209.3 l4.5 4.5 l-4.5 4.5" transform="translate(0,0.0)" fill="none" stroke="#f0f0f0" stroke-width="1.9"/>
<path d="M497 209.3 l4 4.5 l-4 4.5" transform="translate(0,0.0)" fill="none" stroke="#dcdcdc" stroke-width="1.3"/>
<path d="M56.5 209.3 l4.5 4.5 l-4.5 4.5" transform="translate(0,40.19999999999999)" fill="none" stroke="#f0f0f0" stroke-width="1.9"/>
<path d="M497 209.3 l4 4.5 l-4 4.5" transform="translate(0,40.19999999999999)" fill="none" stroke="#dcdcdc" stroke-width="1.3"/>
<path d="M56.5 209.3 l4.5 4.5 l-4.5 4.5" transform="translate(0,80.59999999999997)" fill="none" stroke="#f0f0f0" stroke-width="1.9"/>
<path d="M497 209.3 l4 4.5 l-4 4.5" transform="translate(0,80.59999999999997)" fill="none" stroke="#dcdcdc" stroke-width="1.3"/>
<path d="M141 82.5 l5 5 l5 -5" fill="none" stroke="#f0f0f0" stroke-width="2"/>
<path d="M726 80 l10 10 M736 80 l-10 10" stroke="#f0f0f0" stroke-width="1.5"/>
<path d="M1604 83 l5 5 l5 -5" fill="none" stroke="#f0f0f0" stroke-width="1.4"/>
<path d="M43 311 v19 l4.5 -4 l3.5 7.5 l2.5 -1.2 l-3.5 -7.2 h6 z" fill="#fff" stroke="#222" stroke-width="0.8"/>

<path d="M56.5 171.5 h10 l-3 -6 z" fill="none" stroke="#111" stroke-width="1.4"/>
<path d="M63.5 165.5 l3.5 6 l12 -13 l-4 -7 z M66 163 l5 6 M70 158.5 l5 6" fill="none" stroke="#c8ae58" stroke-width="1.3"/>
<rect x="53" y="176" width="25" height="9" fill="#fdf78e"/>
<rect x="99.5" y="152.5" width="20" height="19.5" fill="none" stroke="#111" stroke-width="1.3"/>
<text x="104.5" y="168" font-size="13" font-family="Liberation Sans" fill="#111">A</text>
<rect x="102.5" y="173" width="14" height="13.5" fill="none" stroke="#333" stroke-width="1"/>
<text x="103" y="180" font-size="8" font-family="Liberation Sans" fill="#222">a</text>
<path d="M146 167 l4.5 4.5 l13 -13.5 l-4.5 -4.5 z M149 164 l4.5 4.5 M160 153.5 l2 -3 M163.5 158 l3 -2" fill="none" stroke="#1a8ed8" stroke-width="1.5"/>
<circle cx="144.5" cy="171.5" r="1.8" fill="#111"/>
<line x1="140" y1="180.5" x2="165" y2="180.5" stroke="#e83040" stroke-width="1.6"/>
<line x1="186" y1="172" x2="203" y2="155" stroke="#111" stroke-width="1.4"/>
<path d="M207 151 l-8 2.5 l5.5 5.5 z" fill="#111"/>
<line x1="184" y1="180.5" x2="207" y2="180.5" stroke="#e85060" stroke-width="1"/><path d="M209 180.5 l-3 -1.5 v3 z" fill="#e85060"/>
<rect x="229.5" y="152.5" width="15" height="8" fill="none" stroke="#111" stroke-width="1.4"/>
<path d="M244 163 l4 3 l-7 7" fill="none" stroke="#111" stroke-width="1.2"/><path d="M240 175 l1 -5 l3 3 z" fill="#111"/>
<text x="231.5" y="179.8" font-size="10" font-family="Liberation Serif" font-weight="bold" fill="#e02030">a</text>
<path d="M289.5 161.0 A3.6 3.6 0 0 1 286.7 166.9 A3.6 3.6 0 0 1 280.3 168.3 A3.6 3.6 0 0 1 275.2 164.3 A3.6 3.6 0 0 1 275.2 157.7 A3.6 3.6 0 0 1 280.3 153.7 A3.6 3.6 0 0 1 286.7 155.1 A3.6 3.6 0 0 1 289.5 161.0 " fill="none" stroke="#111" stroke-width="1.3"/>
<path d="M294.0 179.0 A3.8 3.8 0 0 1 290.0 185.9 A3.8 3.8 0 0 1 282.0 185.9 A3.8 3.8 0 0 1 278.0 179.0 A3.8 3.8 0 0 1 282.0 172.1 A3.8 3.8 0 0 1 290.0 172.1 A3.8 3.8 0 0 1 294.0 179.0 " fill="none" stroke="#e83040" stroke-width="1.1"/>
<ellipse cx="326" cy="161.5" rx="10" ry="7.5" fill="none" stroke="#111" stroke-width="1.4"/>
<circle cx="326.5" cy="180" r="7" fill="none" stroke="#4848e0" stroke-width="1.1"/>
<rect x="360.5" y="154.5" width="19" height="14.5" fill="none" stroke="#111" stroke-width="1.4"/>
<rect x="362.5" y="172.5" width="14.5" height="14.5" fill="none" stroke="#5a5ae8" stroke-width="1.3"/>
<path d="M405 152 h13 q3 0 3 3 v29 q0 3 -3 3 h-11 q-2 0 -2 -2 z" fill="#b9a9c9" stroke="#55709a" stroke-width="1.1"/>
<rect x="70" y="151.6" width="14" height="14" fill="#505050" fill-opacity="0.92"/>
<text x="77" y="162.8" font-size="11" font-family="Liberation Sans" fill="#fff" text-anchor="middle">1</text>
<rect x="113.5" y="151.6" width="14" height="14" fill="#505050" fill-opacity="0.92"/>
<text x="120.5" y="162.8" font-size="11" font-family="Liberation Sans" fill="#fff" text-anchor="middle">2</text>
<rect x="157" y="151.6" width="14" height="14" fill="#505050" fill-opacity="0.92"/>
<text x="164" y="162.8" font-size="11" font-family="Liberation Sans" fill="#fff" text-anchor="middle">3</text>
<rect x="200.5" y="151.6" width="14" height="14" fill="#505050" fill-opacity="0.92"/>
<text x="207.5" y="162.8" font-size="11" font-family="Liberation Sans" fill="#fff" text-anchor="middle">4</text>
<rect x="244" y="151.6" width="14" height="14" fill="#505050" fill-opacity="0.92"/>
<text x="251" y="162.8" font-size="11" font-family="Liberation Sans" fill="#fff" text-anchor="middle">5</text>
<rect x="287.5" y="151.6" width="14" height="14" fill="#505050" fill-opacity="0.92"/>
<text x="294.5" y="162.8" font-size="11" font-family="Liberation Sans" fill="#fff" text-anchor="middle">6</text>
<rect x="331" y="151.6" width="14" height="14" fill="#505050" fill-opacity="0.92"/>
<text x="338" y="162.8" font-size="11" font-family="Liberation Sans" fill="#fff" text-anchor="middle">7</text>
<rect x="374.5" y="151.6" width="14" height="14" fill="#505050" fill-opacity="0.92"/>
<text x="381.5" y="162.8" font-size="11" font-family="Liberation Sans" fill="#fff" text-anchor="middle">8</text>
<rect x="417.5" y="151.6" width="14" height="14" fill="#505050" fill-opacity="0.92"/>
<text x="424.5" y="162.8" font-size="11" font-family="Liberation Sans" fill="#fff" text-anchor="middle">9</text>
<path d="M58 362 h13 q3 0 3 3 v30 q0 3 -3 3 h-11 q-2 0 -2 -2 z" fill="#b9a9c9" stroke="#55709a" stroke-width="1.1"/>

<line x1="1631" y1="71" x2="1664" y2="71" stroke="#bbb" stroke-width="1.5" stroke-dasharray="1.5 1.5"/>
<line x1="1637" y1="105.5" x2="1657.5" y2="85.5" stroke="#eeeeee" stroke-width="1.6"/>
<line x1="1637" y1="146" x2="1652" y2="131" stroke="#eeeeee" stroke-width="1.6"/><path d="M1658 125 l-9.5 2.5 l7 7 z" fill="#eeeeee"/>
<path d="M1637 186.5 q2 -18 20.5 -20.5" fill="none" stroke="#eeeeee" stroke-width="1.6"/>
<path d="M1637 227 l4 -10 l5 3 l4 -9 l4 3 l3.5 -8" fill="none" stroke="#eeeeee" stroke-width="1.6" stroke-linejoin="bevel"/>
<path d="M1637 256 h20 M1637.5 251.5 v9 M1656.5 251.5 v9 M1641 253.5 l-3 2.5 l3 2.5 M1653 253.5 l3 2.5 l-3 2.5" fill="none" stroke="#eeeeee" stroke-width="1.4"/>
<rect x="1637" y="289" width="20.5" height="15.5" fill="none" stroke="#eeeeee" stroke-width="1.6"/>
<ellipse cx="1647.2" cy="337" rx="10.5" ry="7.8" fill="none" stroke="#eeeeee" stroke-width="1.6"/>
<path d="M1637 367.5 h10 l-5 10 l15 10 h-20 z" fill="none" stroke="#eeeeee" stroke-width="1.6"/>
<path d="M1636 409 h22 M1636 409 v23" stroke="#7c5cc0" stroke-width="1.4" fill="none"/><line x1="1640.0" y1="406" x2="1640.0" y2="409" stroke="#7c5cc0" stroke-width="1"/><line x1="1633" y1="413.0" x2="1636" y2="413.0" stroke="#7c5cc0" stroke-width="1"/><line x1="1644.3" y1="406" x2="1644.3" y2="409" stroke="#7c5cc0" stroke-width="1"/><line x1="1633" y1="417.3" x2="1636" y2="417.3" stroke="#7c5cc0" stroke-width="1"/><line x1="1648.6" y1="406" x2="1648.6" y2="409" stroke="#7c5cc0" stroke-width="1"/><line x1="1633" y1="421.6" x2="1636" y2="421.6" stroke="#7c5cc0" stroke-width="1"/><line x1="1652.9" y1="406" x2="1652.9" y2="409" stroke="#7c5cc0" stroke-width="1"/><line x1="1633" y1="425.9" x2="1636" y2="425.9" stroke="#7c5cc0" stroke-width="1"/><line x1="1657.2" y1="406" x2="1657.2" y2="409" stroke="#7c5cc0" stroke-width="1"/><line x1="1633" y1="430.2" x2="1636" y2="430.2" stroke="#7c5cc0" stroke-width="1"/>
<path d="M1636 449.5 h22 M1636 449.5 v23" stroke="#7c5cc0" stroke-width="1.4" fill="none"/><line x1="1640.0" y1="446.5" x2="1640.0" y2="449.5" stroke="#7c5cc0" stroke-width="1"/><line x1="1633" y1="453.5" x2="1636" y2="453.5" stroke="#7c5cc0" stroke-width="1"/><line x1="1644.3" y1="446.5" x2="1644.3" y2="449.5" stroke="#7c5cc0" stroke-width="1"/><line x1="1633" y1="457.8" x2="1636" y2="457.8" stroke="#7c5cc0" stroke-width="1"/><line x1="1648.6" y1="446.5" x2="1648.6" y2="449.5" stroke="#7c5cc0" stroke-width="1"/><line x1="1633" y1="462.1" x2="1636" y2="462.1" stroke="#7c5cc0" stroke-width="1"/><line x1="1652.9" y1="446.5" x2="1652.9" y2="449.5" stroke="#7c5cc0" stroke-width="1"/><line x1="1633" y1="466.4" x2="1636" y2="466.4" stroke="#7c5cc0" stroke-width="1"/><line x1="1657.2" y1="446.5" x2="1657.2" y2="449.5" stroke="#7c5cc0" stroke-width="1"/><line x1="1633" y1="470.7" x2="1636" y2="470.7" stroke="#7c5cc0" stroke-width="1"/>
<path d="M1636 488.5 h22 M1636 488.5 v23" stroke="#7c5cc0" stroke-width="1.4" fill="none"/><line x1="1640.0" y1="485.5" x2="1640.0" y2="488.5" stroke="#7c5cc0" stroke-width="1"/><line x1="1633" y1="492.5" x2="1636" y2="492.5" stroke="#7c5cc0" stroke-width="1"/><line x1="1644.3" y1="485.5" x2="1644.3" y2="488.5" stroke="#7c5cc0" stroke-width="1"/><line x1="1633" y1="496.8" x2="1636" y2="496.8" stroke="#7c5cc0" stroke-width="1"/><line x1="1648.6" y1="485.5" x2="1648.6" y2="488.5" stroke="#7c5cc0" stroke-width="1"/><line x1="1633" y1="501.1" x2="1636" y2="501.1" stroke="#7c5cc0" stroke-width="1"/><line x1="1652.9" y1="485.5" x2="1652.9" y2="488.5" stroke="#7c5cc0" stroke-width="1"/><line x1="1633" y1="505.4" x2="1636" y2="505.4" stroke="#7c5cc0" stroke-width="1"/><line x1="1657.2" y1="485.5" x2="1657.2" y2="488.5" stroke="#7c5cc0" stroke-width="1"/><line x1="1633" y1="509.7" x2="1636" y2="509.7" stroke="#7c5cc0" stroke-width="1"/>
<path d="M1636 530 h22 M1636 530 v23" stroke="#7c5cc0" stroke-width="1.4" fill="none"/><line x1="1640.0" y1="527" x2="1640.0" y2="530" stroke="#7c5cc0" stroke-width="1"/><line x1="1633" y1="534.0" x2="1636" y2="534.0" stroke="#7c5cc0" stroke-width="1"/><line x1="1644.3" y1="527" x2="1644.3" y2="530" stroke="#7c5cc0" stroke-width="1"/><line x1="1633" y1="538.3" x2="1636" y2="538.3" stroke="#7c5cc0" stroke-width="1"/><line x1="1648.6" y1="527" x2="1648.6" y2="530" stroke="#7c5cc0" stroke-width="1"/><line x1="1633" y1="542.6" x2="1636" y2="542.6" stroke="#7c5cc0" stroke-width="1"/><line x1="1652.9" y1="527" x2="1652.9" y2="530" stroke="#7c5cc0" stroke-width="1"/><line x1="1633" y1="546.9" x2="1636" y2="546.9" stroke="#7c5cc0" stroke-width="1"/><line x1="1657.2" y1="527" x2="1657.2" y2="530" stroke="#7c5cc0" stroke-width="1"/><line x1="1633" y1="551.2" x2="1636" y2="551.2" stroke="#7c5cc0" stroke-width="1"/>
<path d="M1642 428 v-8 l5 -7 h9 v15 z" fill="none" stroke="#eeeeee" stroke-width="1.5"/>
<rect x="1640.2" y="426.2" width="3.6" height="3.6" fill="#eeeeee"/>
<rect x="1640.2" y="418.2" width="3.6" height="3.6" fill="#eeeeee"/>
<rect x="1645.2" y="411.2" width="3.6" height="3.6" fill="#eeeeee"/>
<rect x="1654.2" y="411.2" width="3.6" height="3.6" fill="#eeeeee"/>
<rect x="1654.2" y="426.2" width="3.6" height="3.6" fill="#eeeeee"/>
<path d="M1641.5 469 v-10 l7 -7 h9 v17 z" fill="none" stroke="#eeeeee" stroke-width="1.6"/>
<path d="M1642 498 h15 M1642 493 v10 M1657 493 v10 M1645 496 l-2.5 2 l2.5 2 M1654 496 l2.5 2 l-2.5 2" fill="none" stroke="#eeeeee" stroke-width="1.5"/>
<path d="M1640 546 l5 -10 M1644 546 l5 -10 M1648 546 l5 -10 M1652 546 l5 -10 M1639 542 h19" fill="none" stroke="#eeeeee" stroke-width="1.5"/>
<line x1="1631" y1="563" x2="1664" y2="563" stroke="#bbb" stroke-width="1.5" stroke-dasharray="1.5 1.5"/>
<rect x="1641.5" y="577" width="20" height="20.5" fill="none" stroke="#eeeeee" stroke-width="1.5"/><text x="1651.5" y="592" text-anchor="middle" font-size="12" font-family="Liberation Sans" fill="#eeeeee">A</text>
<path d="M1642 637.5 h10 l-4 -6 z" fill="none" stroke="#fff" stroke-width="1.4"/><path d="M1647 630 l8 -11 l5 4 l-6 10 z M1650 630 l6 4 M1652 626 l5 3 M1642 637.5 h20" fill="none" stroke="#d8cc40" stroke-width="1.4"/>
<path d="M1643 675 l3 -6 l12 -14 l3 2 l-11 14 z M1648 666 l5 4 M1658 655 l3 -6" fill="none" stroke="#5a60e8" stroke-width="1.6"/><circle cx="1643" cy="676" r="1.8" fill="#fff"/>
<rect x="1642" y="698" width="16" height="9" fill="none" stroke="#eeeeee" stroke-width="1.5"/><path d="M1641 716 q2 -4 4 0 q2 -4 4 0 q2 -4 4 0 q2 -4 4 0 M1658 707 l3 4 l-3 5" fill="none" stroke="#eeeeee" stroke-width="1.4"/>
<path d="M1654.2 741.0 A3.8 3.8 0 0 1 1658.7 745.8 A3.8 3.8 0 0 1 1657.7 752.2 A3.8 3.8 0 0 1 1652.1 755.5 A3.8 3.8 0 0 1 1646.0 753.1 A3.8 3.8 0 0 1 1644.1 746.9 A3.8 3.8 0 0 1 1647.7 741.5 A3.8 3.8 0 0 1 1654.2 741.0 " fill="none" stroke="#eeeeee" stroke-width="1.5"/>
<rect x="1642" y="778.5" width="16" height="9" fill="none" stroke="#eeeeee" stroke-width="1.5"/><path d="M1657 790 l3 2 l-8 7" fill="none" stroke="#eeeeee" stroke-width="1.5"/><path d="M1650 800 l1 -6 l4 4 z" fill="#eeeeee"/>
<path d="M1649 821 v-4 q-3 -2 -1 -6 q3 -3 6 0 q2 4 -1 6 v4 h7 v4 h-18 v-4 z M1641 829.5 h20" fill="none" stroke="#eeeeee" stroke-width="1.5"/><path d="M1664 819 l3.5 3.5 l3.5 -3.5" fill="none" stroke="#eeeeee" stroke-width="1.5"/>
<rect x="1641.5" y="859.5" width="20" height="19" fill="none" stroke="#eeeeee" stroke-width="1.5"/><path d="M1642 876 l6 -7 l4 4 l3 -3 l6 6" fill="none" stroke="#eeeeee" stroke-width="1.4"/><circle cx="1647" cy="865" r="1.8" fill="#eeeeee"/>
<path d="M1645 904 h16 v17 h-17 v-14" fill="none" stroke="#eeeeee" stroke-width="1.5" stroke-dasharray="2.5 2"/><path d="M1640 904 h8 M1644 900 v8" stroke="#eeeeee" stroke-width="1.5"/>
<rect x="518.5" y="988.5" width="19" height="19" fill="none" stroke="#6a6a6a" stroke-width="1.4"/>
<rect x="558.5" y="988.5" width="19.5" height="19" fill="none" stroke="#eeeeee" stroke-width="1.4"/><line x1="568.2" y1="988.5" x2="568.2" y2="1007.5" stroke="#eeeeee" stroke-width="1.4"/>
<rect x="598.5" y="988.5" width="19.5" height="19" fill="none" stroke="#eeeeee" stroke-width="1.4"/><path d="M598.5 994.8 h19.5 M598.5 1001.2 h19.5" stroke="#eeeeee" stroke-width="1.4"/>
<line x1="631.5" y1="990" x2="631.5" y2="1007" stroke="#555" stroke-width="1.2"/>
<path d="M646 987 h10 l5.5 5.5 v15.5 h-15.5 z M656 987 v5.5 h5.5 M653.5 992 v13 M647.5 998.5 h12 M651 994 l2.5 -2 l2.5 2 M651 1003 l2.5 2 l2.5 -2 M649.5 996 l-2 2.5 l2 2.5 M657.5 996 l2 2.5 l-2 2.5" fill="none" stroke="#eeeeee" stroke-width="1.3"/>
<path d="M686 987 h17 M686 987 v4 M703 987 v4 M687 1001 v-8 h10 l5 5 v3 M686 1006 h17 M689 1003.5 l-3 2.5 l3 2.5 M700 1003.5 l3 2.5 l-3 2.5 M686 1003 v6 M703 1003 v6" fill="none" stroke="#eeeeee" stroke-width="1.3"/>
<path d="M729 1004 l-3 -8 q-1 -3 2 -3 l3 5 v-11 q0 -2 2 -2 q2 0 2 2 v8 v-10 q0 -2 2 -2 q2 0 2 2 v10 v-8 q0 -2 2 -2 q2 0 2 2 v8 v-5 q0 -2 2 -2 q2 0 2 2 v9 q0 6 -5 8 h-6 q-3 -1 -5 -4 z" fill="none" stroke="#7fd8f8" stroke-width="1.5" stroke-linejoin="round"/>
<path d="M771 988 v17 l4 -4 l3 7 l2.5 -1 l-3 -7 h5.5 z" fill="none" stroke="#eeeeee" stroke-width="1.4" stroke-linejoin="round"/>
<path d="M808 988 h6 M811 988 v20 M808 1008 h6" fill="none" stroke="#eeeeee" stroke-width="1.4"/><text x="815" y="1004" font-size="12" font-family="Liberation Sans" fill="#eeeeee">A</text>
<circle cx="854" cy="996" r="7.5" fill="none" stroke="#eeeeee" stroke-width="1.5"/><path d="M859.5 1001.5 l7 7 M850.5 994.5 h7 M854 991 v7 M850.5 998.5 h7" stroke="#eeeeee" stroke-width="1.5"/>
<path d="M891.5 991 v14 M903 991 l-9 7 l9 7 z" fill="none" stroke="#555" stroke-width="1.3"/>
<path d="M941 991 l-9 7 l9 7 z" fill="none" stroke="#555" stroke-width="1.3"/>
<rect x="959.5" y="988.5" width="284" height="21" rx="2.5" fill="none" stroke="#7a7a7a" stroke-width="1.4"/>
<path d="M1260 991 l9 7 l-9 7 z" fill="none" stroke="#555" stroke-width="1.3"/>
<rect x="1301" y="979" width="13" height="40" fill="#333"/>
<path d="M1302.5 995.5 l4.5 4.5 l4.5 -4.5" fill="none" stroke="#eeeeee" stroke-width="1.6"/>
<path d="M1020 1029.5 v19.5 M1026 1029.5 v19.5 M1032 1029.5 v19.5 M1016.5 1033 h19.5 M1016.5 1039 h19.5 M1016.5 1045 h19.5" stroke="#eeeeee" stroke-width="1.9"/>
<path d="M1061 1029.5 v19.5 M1067 1029.5 v8 M1073 1029.5 v4 M1057.5 1033 h19 M1057.5 1039 h8 M1057.5 1045 h6" stroke="#eeeeee" stroke-width="1.9"/>
<path d="M1068 1037.5 h3.5 a5.5 5.5 0 0 1 0 11 h-4" fill="none" stroke="#eeeeee" stroke-width="2"/><path d="M1069.5 1034.7 l-3 2.8 l3 2.8" fill="none" stroke="#eeeeee" stroke-width="1.7"/>
<path d="M1099.5 1030.5 h9 l5 5 v2 M1099.5 1030.5 v18.5 h4 M1108.5 1030.5 v5 h5" fill="none" stroke="#cdeeff" stroke-width="1.6"/>
<path d="M1107 1037.5 h3.5 a5.5 5.5 0 0 1 0 11 h-4" fill="none" stroke="#cdeeff" stroke-width="2"/><path d="M1108.5 1034.7 l-3 2.8 l3 2.8" fill="none" stroke="#cdeeff" stroke-width="1.7"/>
<path d="M1139 1048 l2.5 -6 l13 -13 l4 4 l-13 13 z M1141.5 1042 l4 4" fill="none" stroke="#cdeeff" stroke-width="1.6"/><rect x="1137.5" y="1046" width="4" height="4" fill="#cdeeff"/>
<path d="M1148 1037.5 h3.5 a5.5 5.5 0 0 1 0 11 h-4" fill="none" stroke="#cdeeff" stroke-width="2"/><path d="M1149.5 1034.7 l-3 2.8 l3 2.8" fill="none" stroke="#cdeeff" stroke-width="1.7"/>
<path d="M1179 1048 l2.5 -6 l13 -13 l4 4 l-13 13 z M1181.5 1042 l4 4" fill="none" stroke="#eeeeee" stroke-width="1.6"/><rect x="1177.5" y="1046" width="4" height="4" fill="#eeeeee"/>
<path d="M1197.5 1042 a5.5 5.5 0 1 1 -5.5 -5.5" fill="none" stroke="#4f70e8" stroke-width="1.9"/><path d="M1190 1033.5 l3.5 3 l-3.5 3" fill="none" stroke="#4f70e8" stroke-width="1.6"/>
<rect x="1218" y="1030.5" width="20.5" height="19" fill="none" stroke="#eeeeee" stroke-width="1.6"/><path d="M1218 1032.5 h20.5" stroke="#888" stroke-width="1"/><path d="M1221.5 1037.5 h13 l-3 -3 M1235 1043.5 h-13 l3 3" fill="none" stroke="#eeeeee" stroke-width="1.5"/>
<path d="M1251.5 1037.5 l4.5 4.5 l4.5 -4.5" fill="none" stroke="#eeeeee" stroke-width="1.7"/>

</svg>
</body></html>
